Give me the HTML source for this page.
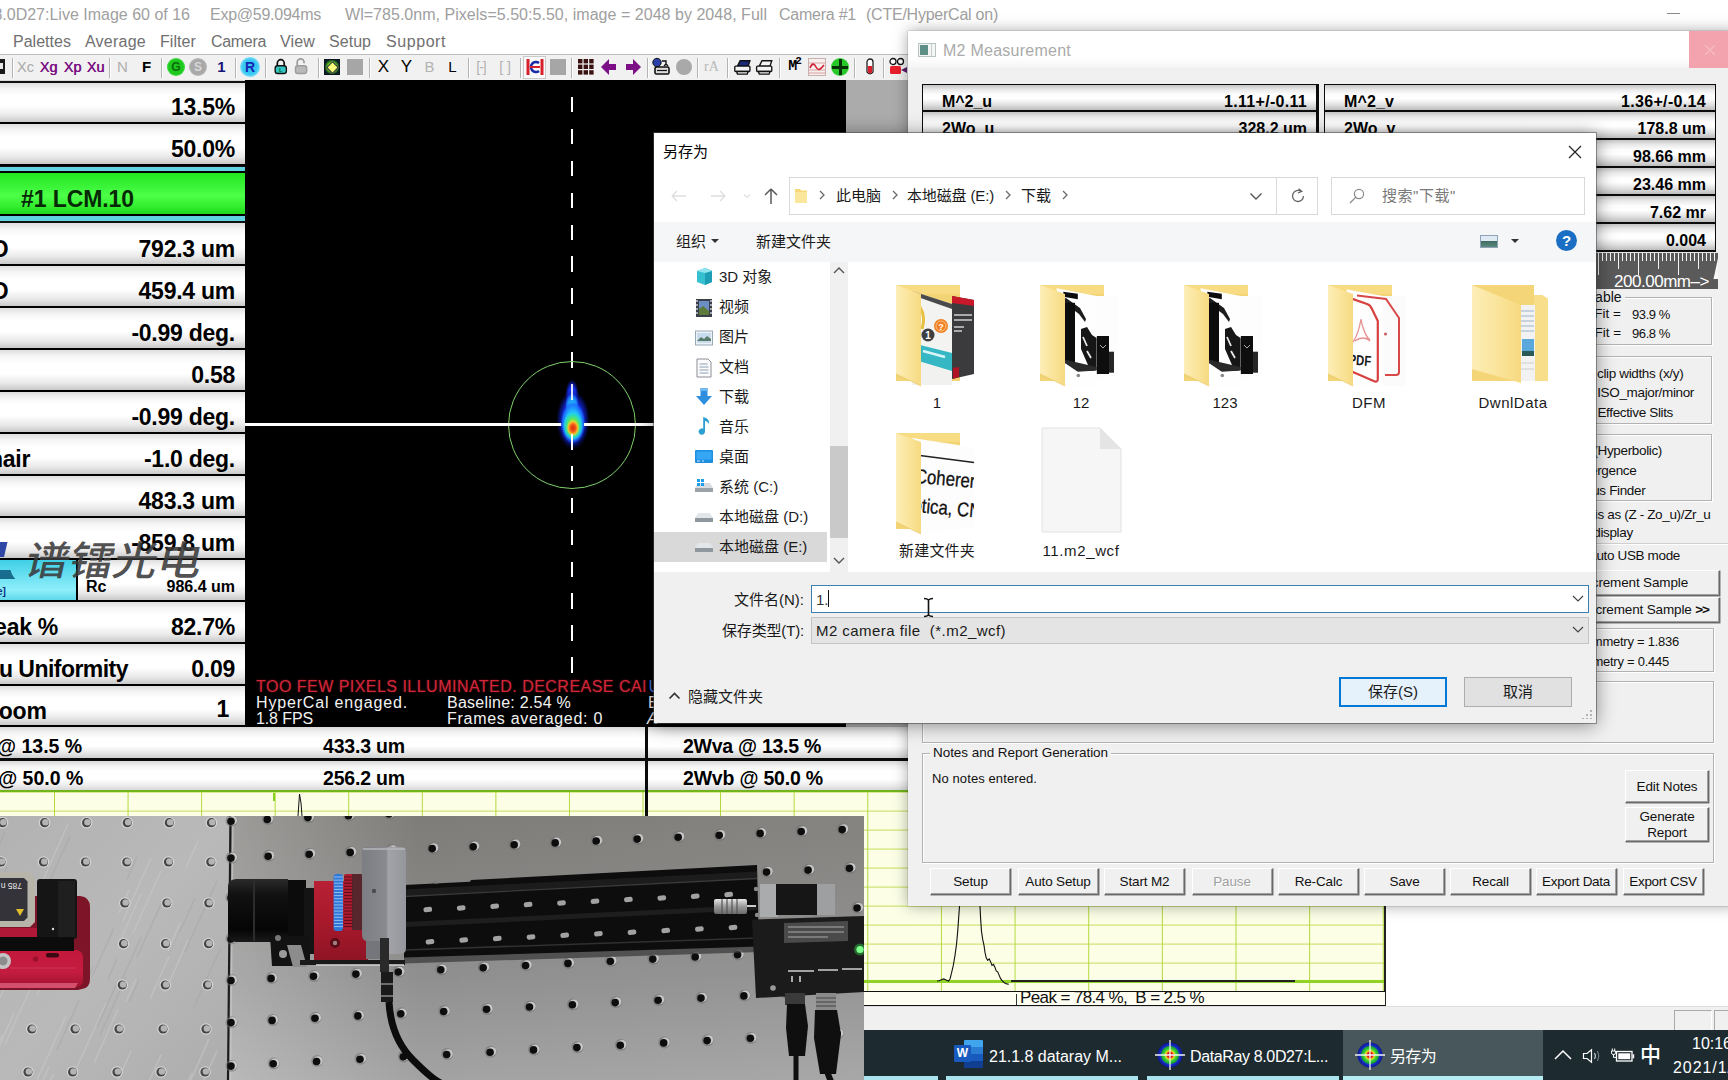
<!DOCTYPE html>
<html lang="zh"><head><meta charset="utf-8"><title>DataRay</title>
<style>
*{box-sizing:border-box;margin:0;padding:0}
html,body{width:1728px;height:1080px;overflow:hidden;background:#fff}
body{position:relative;font-family:"Liberation Sans","Noto Sans CJK SC",sans-serif;color:#000}
.a{position:absolute}
.t{position:absolute;white-space:nowrap;line-height:1}
.b{font-weight:bold}
.r{text-align:right}
.row{position:absolute;left:0;width:245px;height:40px;border-bottom:2px solid #000;box-sizing:content-box;
 background:linear-gradient(#dedede 0%,#f6f6f6 16%,#fff 32%,#fff 60%,#e9e9e9 82%,#c9c9c9 100%)}
.row .t{font-weight:bold;font-size:23px;letter-spacing:-.25px;top:10px}
.row .v{right:10px}
.sep{position:absolute;top:58px;width:1px;height:20px;background:#b4b4b4;box-shadow:1px 0 0 #fff}
.ti{position:absolute;top:56px;height:22px;line-height:22px;font-size:16px;white-space:nowrap;text-align:center}
</style></head><body>
<!-- ===== DataRay main window ===== -->
<div class="a" style="left:0;top:0;width:1728px;height:54px;background:#fff"></div>
<div class="t" style="right:1538px;top:7px;font-size:16px;color:#a0a0a0" >8.0D27:Live Image 60 of 16</div>
<div class="t" style="letter-spacing:-0.257px;left:210px;top:7px;font-size:16px;color:#a0a0a0">Exp@59.094ms</div>
<div class="t" style="letter-spacing:0.031px;left:345px;top:7px;font-size:16px;color:#a0a0a0">Wl=785.0nm, Pixels=5.50:5.50, image = 2048 by 2048, Full</div>
<div class="t" style="letter-spacing:-0.240px;left:779px;top:7px;font-size:16px;color:#a0a0a0">Camera #1</div>
<div class="t" style="letter-spacing:-0.237px;left:866px;top:7px;font-size:16px;color:#a0a0a0">(CTE/HyperCal on)</div>
<div class="a" style="left:1667px;top:12.500px;width:13px;height:1.200px;background:#8a8a8a"></div>
<!-- menu -->
<div class="t" style="letter-spacing:0.023px;left:13px;top:34px;font-size:16px;color:#707070">Palettes</div>
<div class="t" style="letter-spacing:0.241px;left:85px;top:34px;font-size:16px;color:#707070">Average</div>
<div class="t" style="letter-spacing:0.073px;left:160px;top:34px;font-size:16px;color:#707070">Filter</div>
<div class="t" style="letter-spacing:-0.318px;left:211px;top:34px;font-size:16px;color:#707070">Camera</div>
<div class="t" style="letter-spacing:0.152px;left:280px;top:34px;font-size:16px;color:#707070">View</div>
<div class="t" style="letter-spacing:0.037px;left:329px;top:34px;font-size:16px;color:#707070">Setup</div>
<div class="t" style="letter-spacing:0.565px;left:386px;top:34px;font-size:16px;color:#707070">Support</div>
<!-- toolbar -->
<div class="a" style="left:0;top:54px;width:910px;height:27px;background:#f1f1f1;border-top:1px solid #bdbdbd;border-bottom:1px solid #d8d8d8"></div>
<div class="a" style="left:0;top:59px;width:5px;height:15px;background:#1a1a1a"></div><div class="a" style="left:0;top:63px;width:3px;height:6px;background:#e8e8e8"></div>
<i class="sep" style="left:12px"></i><i class="sep" style="left:109px"></i><i class="sep" style="left:161px"></i><i class="sep" style="left:235px"></i><i class="sep" style="left:265px"></i><i class="sep" style="left:318px"></i><i class="sep" style="left:369px"></i><i class="sep" style="left:468px"></i><i class="sep" style="left:520px"></i><i class="sep" style="left:571px"></i><i class="sep" style="left:647px"></i><i class="sep" style="left:697px"></i><i class="sep" style="left:727px"></i><i class="sep" style="left:779px"></i><i class="sep" style="left:854px"></i><i class="sep" style="left:883px"></i>
<span class="ti" style="left:16px;width:19px;color:#a9a9a9;font-size:14.500px">Xc</span>
<span class="ti" style="left:39px;width:19px;color:#7a0f82;font-size:14.500px;text-shadow:.4px 0 0 #7a0f82">Xg</span>
<span class="ti" style="left:63px;width:19px;color:#7a0f82;font-size:14.500px;text-shadow:.4px 0 0 #7a0f82">Xp</span>
<span class="ti" style="left:86px;width:19px;color:#7a0f82;font-size:14.500px;text-shadow:.4px 0 0 #7a0f82">Xu</span>
<span class="ti" style="left:113px;width:19px;color:#b0b0b0;font-size:15px">N</span>
<span class="ti b" style="left:137px;width:19px;color:#000;font-size:15px">F</span>
<span class="ti b" style="left:167px;top:58px;width:18px;height:18px;line-height:18px;border-radius:50%;background:radial-gradient(#1fc81f 55%,#46e046 75%,rgba(90,230,90,0) 100%);color:#0a6a0a;font-size:12px">G</span>
<span class="ti b" style="left:189px;top:58px;width:18px;height:18px;line-height:18px;border-radius:50%;background:radial-gradient(#a8a8a8 55%,#bdbdbd 75%,rgba(190,190,190,0) 100%);color:#d8d8d8;font-size:12px">S</span>
<span class="ti b" style="left:212px;width:19px;color:#16167a;font-size:15px">1</span>
<span class="ti b" style="left:240px;top:57px;width:20px;height:20px;line-height:20px;border-radius:50%;background:radial-gradient(#37c8f2 50%,#8fe2fa 75%,rgba(160,230,250,0) 100%);color:#1527b5;font-size:14px">R</span>
<!-- locks -->
<svg class="a" style="left:272px;top:58px" width="40" height="19" viewBox="0 1 46 22"><path d="M6 10V7a4 4 0 0 1 8 0v3" fill="none" stroke="#111" stroke-width="2"/><rect x="3.5" y="10" width="13" height="9" rx="3" fill="#35c5c5" stroke="#111" stroke-width="1.6"/><text x="10" y="17.5" font-size="7" font-family="Liberation Sans,sans-serif" font-weight="bold" text-anchor="middle" fill="#063">L</text><path d="M29 10V6a4 4 0 0 1 8 0v1" fill="none" stroke="#9c9c9c" stroke-width="2"/><rect x="27" y="10" width="13" height="9" rx="3" fill="#b9b9b9" stroke="#9c9c9c" stroke-width="1.6"/></svg>
<div class="a" style="left:324px;top:59px;width:16px;height:16px;background:radial-gradient(#e8ff50 18%,#58c820 45%,#0c1c28 78%);border:1px solid #0a1520"></div>
<div class="a" style="left:327.5px;top:62.5px;width:9px;height:9px;border:1.5px solid #223;transform:rotate(45deg);background:#f6ff7a"></div>
<div class="a" style="left:347px;top:59px;width:16px;height:16px;background:#a6a6a6"></div>
<span class="ti" style="left:374px;width:19px;color:#000;font-size:17px">X</span>
<span class="ti" style="left:397px;width:19px;color:#000;font-size:17px">Y</span>
<span class="ti" style="left:420px;width:19px;color:#b3b3b3;font-size:15px">B</span>
<span class="ti" style="left:443px;width:19px;color:#000;font-size:15px">L</span>
<span class="ti" style="left:471px;width:20px;color:#b3b3b3;font-size:14px;letter-spacing:-1px">[-]</span>
<span class="ti" style="left:495px;width:20px;color:#b3b3b3;font-size:14px">[ ]</span>
<div class="a" style="left:523px;top:56px;width:23px;height:23px;background:#fafafa;border:1px solid #c9c9c9"></div>
<svg class="a" style="left:526px;top:58px" width="18" height="18" viewBox="0 0 18 18"><path d="M2 1v16M16 1v16" stroke="#d8202c" stroke-width="3"/><path d="M13 5a5 5 0 1 0 0 8" fill="none" stroke="#1a2aa8" stroke-width="2.6"/><path d="M4 9h10" stroke="#d8202c" stroke-width="2"/></svg>
<div class="a" style="left:550px;top:59px;width:16px;height:16px;background:#a6a6a6"></div>
<svg class="a" style="left:578px;top:59px" width="16" height="16" viewBox="0 0 16 16"><g fill="#3a1212"><rect x="0" y="0" width="4.4" height="4.4"/><rect x="5.6" y="0" width="4.4" height="4.4"/><rect x="11.2" y="0" width="4.4" height="4.4"/><rect x="0" y="5.6" width="4.4" height="4.4"/><rect x="5.6" y="5.6" width="4.4" height="4.4"/><rect x="11.2" y="5.6" width="4.4" height="4.4"/><rect x="0" y="11.2" width="4.4" height="4.4"/><rect x="5.6" y="11.2" width="4.4" height="4.4"/><rect x="11.2" y="11.2" width="4.4" height="4.4"/></g></svg>
<svg class="a" style="left:600px;top:58px" width="42" height="18" viewBox="0 0 42 18"><path d="M1 9l8-8v5h7v6H9v5z" fill="#7d0f86"/><path d="M41 9l-8-8v5h-7v6h7v5z" fill="#7d0f86"/></svg>
<svg class="a" style="left:651px;top:57px" width="22" height="20" viewBox="0 0 22 20"><circle cx="6" cy="5.5" r="4.2" fill="#2a3fa8" stroke="#111" stroke-width="1"/><path d="M11 4h4v3M17 9l-2-2-2 2" fill="none" stroke="#111" stroke-width="1.4"/><rect x="4" y="10" width="14" height="7" rx="1.5" fill="#dcdcdc" stroke="#111" stroke-width="1.6"/><path d="M6 13.5h10" stroke="#111" stroke-width="1.2"/></svg>
<div class="a" style="left:676px;top:59px;width:16px;height:16px;border-radius:50%;background:#a9a9a9"></div>
<span class="ti" style="left:701px;width:21px;color:#b8b8b8;font-size:14px;font-family:'Liberation Serif',serif">rA</span>
<svg class="a" style="left:733px;top:58px" width="41" height="18" viewBox="0 0 46 20"><g fill="#f4f4f4" stroke="#111" stroke-width="1.5"><path d="M5 9l3-6h11l-2 6z" fill="#1c2a7a"/><rect x="2" y="9" width="17" height="6" rx="1"/><path d="M4 15h13l-1 3H5z"/><path d="M29.500 9l3-6h11l-2 6z"/><rect x="26.500" y="9" width="17" height="6" rx="1"/><path d="M28.500 15h13l-1 3H29.500z"/></g></svg>
<span class="ti b" style="left:783px;width:22px;color:#000;font-size:15px;font-family:'Liberation Mono',monospace;letter-spacing:-2px">M<sup style="font-size:11px;line-height:0">2</sup></span>
<svg class="a" style="left:808px;top:58px" width="18" height="18" viewBox="0 0 18 18"><rect x=".5" y=".5" width="17" height="17" fill="#f7eeee" stroke="#c9b0b0"/><path d="M1 5h16M1 12h16M1 15h16" stroke="#d9a0a0" stroke-width="1"/><path d="M2 10c2-5 4-5 6-1s4 3 8-2" fill="none" stroke="#d02030" stroke-width="1.6"/></svg>
<div class="a" style="left:831px;top:58px;width:18px;height:18px;border-radius:50%;background:radial-gradient(#28c828 60%,#5be05b 80%,rgba(90,230,90,0) 100%)"></div>
<div class="a" style="left:838.5px;top:59px;width:3px;height:16px;background:#063006"></div><div class="a" style="left:832px;top:65.5px;width:16px;height:3px;background:#063006"></div>
<svg class="a" style="left:864px;top:57px" width="12" height="21" viewBox="0 0 12 21"><path d="M3 5a3 3 0 0 1 6 0v10a3.4 3.4 0 0 1-6 0z" fill="#fff" stroke="#222" stroke-width="1.3"/><path d="M3.8 9h4.4v6a2.4 2.4 0 0 1-4.4 0z" fill="#d8202c"/></svg>
<svg class="a" style="left:888px;top:57px" width="22" height="21" viewBox="0 0 22 21"><circle cx="5" cy="4.5" r="3" fill="#fff" stroke="#111" stroke-width="1.3"/><circle cx="12.5" cy="4.5" r="3" fill="#fff" stroke="#111" stroke-width="1.3"/><rect x="2" y="9" width="11" height="8" rx="1.5" fill="#e8202c"/><path d="M13 13l6-3v6z" fill="#5a1a6a"/></svg>
<!-- ===== left results panel ===== -->
<div class="a" style="left:0;top:81px;width:245px;height:647px;background:#e8e8e8"></div>
<div class="a" style="left:0;top:81px;width:245px;height:2px;background:#111"></div>
<div class="row" style="top:83px;height:39px"><span class="t v" style="top:12.800px">13.5%</span></div>
<div class="row" style="top:124px"><span class="t v" style="top:13.800px">50.0%</span></div>
<div class="a" style="left:0;top:166px;width:245px;height:57px;background:#5fd3e0;border-top:1px solid #111;border-bottom:2px solid #111"></div>
<div class="a" style="left:0;top:171px;width:245px;height:45px;border-top:2px solid #000;border-bottom:2px solid #000;background:linear-gradient(#22e61e 0%,#3cf53a 35%,#4dff48 55%,#34f030 80%,#1fd81c 100%)"><span class="t b" style="letter-spacing:-0.085px;left:21px;top:14.500px;font-size:23px;color:#062a06">#1 LCM.10</span></div>
<div class="row" style="top:223px;height:41px"><span class="t" style="left:-8px;top:14.500px">D</span><span class="t v" style="top:14.500px">792.3 um</span></div>
<div class="row" style="top:266px"><span class="t" style="left:-8px;top:13.600px">D</span><span class="t v" style="top:13.600px">459.4 um</span></div>
<div class="row" style="top:308px"><span class="t v" style="top:13.600px">-0.99 deg.</span></div>
<div class="row" style="top:350px"><span class="t v" style="top:13.600px">0.58</span></div>
<div class="row" style="top:392px"><span class="t v" style="top:13.600px">-0.99 deg.</span></div>
<div class="row" style="top:434px"><span class="t" style="left:-11px;top:13.600px">hair</span><span class="t v" style="top:13.600px">-1.0 deg.</span></div>
<div class="row" style="top:476px"><span class="t v" style="top:13.600px">483.3 um</span></div>
<div class="row" style="top:518px"><span class="t v" style="top:13.600px">-859.8 um</span></div>
<div class="row" style="top:560px"><span class="t" style="left:86px;top:19px;font-size:16px;letter-spacing:0">Rc</span><span class="t v" style="top:19px;font-size:16px;letter-spacing:0">986.4 um</span></div>
<div class="a" style="left:0;top:560px;width:78px;height:40px;border-right:2px solid #000;background:linear-gradient(#3fcfe6 0%,#6fe2f2 45%,#8feefa 75%,#5fd8ea 100%)"><span class="t b" style="left:-3px;top:27px;font-size:10px;color:#0b2e7a">e]</span></div>
<div class="row" style="top:602px"><span class="t" style="left:-21px;top:13.600px">Peak %</span><span class="t v" style="top:13.600px">82.7%</span></div>
<div class="row" style="top:644px"><span class="t" style="letter-spacing:-0.538px;left:-1px;top:13.600px">u Uniformity</span><span class="t v" style="top:13.600px">0.09</span></div>
<div class="row" style="top:686px;height:39px"><span class="t" style="left:-15px;top:13.600px">Zoom</span><span class="t v" style="right:16px;top:12.300px">1</span></div>
<!-- watermark -->
<svg class="a" style="left:0;top:540px" width="18" height="42" viewBox="0 0 18 42"><path d="M0 2h7.500L4 17H0z" fill="#2f46a6"/><path d="M0 30h10.500q1.500 6 5 9H0z" fill="#186c8e"/></svg>
<div class="t" style="left:27px;top:537.500px;font-size:40px;font-weight:500;color:rgba(58,58,58,.9);transform:skewX(-13deg) scaleX(1.100);transform-origin:0 50%;font-family:'Noto Sans CJK SC',sans-serif">谱镭光电</div>
<!-- ===== black camera image ===== -->
<div class="a" style="left:245px;top:80px;width:601px;height:647px;background:#000;overflow:hidden">
 <div class="a" style="left:0;top:343px;width:601px;height:3px;background:#fff"></div>
 <div class="a" style="left:325.500px;top:16.900px;width:2.500px;height:335px;background:repeating-linear-gradient(#fff 0,#fff 15.400px,transparent 15.400px,transparent 31.900px)"></div>
 <div class="a" style="left:325.500px;top:354.400px;width:2.500px;height:239px;background:repeating-linear-gradient(#fff 0,#fff 15.400px,transparent 15.400px,transparent 31.900px)"></div>
 <div class="a" style="left:263px;top:281px;width:128px;height:128px;border:1.300px solid #7fd06a;border-radius:50%"></div>
 <!-- beam -->
 <svg class="a" style="left:296px;top:290px" width="64" height="90" viewBox="0 0 64 90"><defs>
  <radialGradient id="b1"><stop offset="0" stop-color="#1838ff"/><stop offset=".55" stop-color="#1430ee" stop-opacity=".95"/><stop offset=".8" stop-color="#0c1cb0" stop-opacity=".6"/><stop offset="1" stop-color="#060a50" stop-opacity="0"/></radialGradient>
  <radialGradient id="b2"><stop offset="0" stop-color="#2ae0ff"/><stop offset=".6" stop-color="#20b4ff"/><stop offset=".85" stop-color="#1c70ff" stop-opacity=".8"/><stop offset="1" stop-color="#1838ff" stop-opacity="0"/></radialGradient>
  <radialGradient id="b3"><stop offset="0" stop-color="#d8f23a"/><stop offset=".5" stop-color="#5ee65a"/><stop offset=".8" stop-color="#28dcc0" stop-opacity=".85"/><stop offset="1" stop-color="#2ae0ff" stop-opacity="0"/></radialGradient>
  <radialGradient id="b4"><stop offset="0" stop-color="#e02a10"/><stop offset=".4" stop-color="#ee5518"/><stop offset=".7" stop-color="#f8b428"/><stop offset="1" stop-color="#e8f23a" stop-opacity="0"/></radialGradient></defs>
  <ellipse cx="31" cy="26" rx="7" ry="17" fill="url(#b1)"/>
  <ellipse cx="32" cy="50" rx="17" ry="30" fill="url(#b1)"/>
  <ellipse cx="31" cy="36" rx="7" ry="13" fill="url(#b2)" opacity=".8"/>
  <ellipse cx="32" cy="53" rx="12.500" ry="21" fill="url(#b2)"/>
  <ellipse cx="32" cy="56" rx="10" ry="14.500" fill="url(#b3)"/>
  <ellipse cx="32" cy="58" rx="6.500" ry="8.500" fill="url(#b4)"/>
 </svg>
 <div class="a" style="left:325.500px;top:304px;width:2.500px;height:15.500px;background:rgba(255,255,255,.85)"></div>
 <div class="a" style="left:325.500px;top:354.400px;width:2.500px;height:15.400px;background:#fff"></div>
 <div class="a" style="left:0;top:343px;width:316px;height:3px;background:#fff"></div><div class="a" style="left:339px;top:343px;width:270px;height:3px;background:#fff"></div>
 <!-- status text -->
 <div class="t" style="letter-spacing:0.477px;left:11px;top:599px;font-size:16px;color:#d02639;text-shadow:0 0 2px #7a1018">TOO FEW PIXELS ILLUMINATED. DECREASE CAI</div>
 <div class="t" style="letter-spacing:0.831px;left:11px;top:615px;font-size:16px;color:#f2f2f2">HyperCal engaged.</div>
 <div class="t" style="letter-spacing:-0.116px;left:11px;top:631px;font-size:16px;color:#f2f2f2">1.8 FPS</div>
 <div class="t" style="letter-spacing:0.245px;left:202px;top:615px;font-size:16px;color:#f2f2f2">Baseline: 2.54 %</div>
 <div class="t" style="letter-spacing:0.712px;left:202px;top:631px;font-size:16px;color:#f2f2f2">Frames averaged: 0</div>
 <div class="t" style="left:403.500px;top:599px;font-size:16px;color:#3f6fe0">U</div>
 <div class="t" style="left:403px;top:615px;font-size:16px;color:#f2f2f2">E</div>
 <div class="t" style="left:402px;top:631px;font-size:16px;color:#f2f2f2;font-style:italic">A</div>
</div>
<div class="a" style="left:846px;top:80px;width:64px;height:650px;background:#ababab"></div>
<!-- ===== width rows + profile plots ===== -->
<div class="a" style="left:0;top:727px;width:910px;height:31px;background:linear-gradient(#d9d9d9 0%,#f3f3f3 18%,#fff 36%,#fff 62%,#e6e6e6 84%,#cfcfcf 100%)"></div>
<div class="a" style="left:0;top:758px;width:910px;height:3px;background:#0a0a0a"></div>
<div class="a" style="left:0;top:761px;width:910px;height:29px;background:linear-gradient(#d9d9d9 0%,#f3f3f3 18%,#fff 36%,#fff 62%,#ececec 84%,#d8d8d8 100%)"></div>
<div class="t b" style="left:-60px;top:737px;font-size:19.5px" >2Wua @ 13.5 %</div>
<div class="t b" style="left:-60px;top:768.5px;font-size:19.5px" >2Wub @ 50.0 %</div>
<div class="t b" style="letter-spacing:-0.184px;left:323px;top:737px;font-size:19.5px">433.3 um</div>
<div class="t b" style="letter-spacing:-0.184px;left:323px;top:768.5px;font-size:19.5px">256.2 um</div>
<div class="t b" style="letter-spacing:-0.269px;left:683px;top:737px;font-size:19.5px">2Wva @ 13.5 %</div>
<div class="t b" style="letter-spacing:-0.198px;left:683px;top:768.5px;font-size:19.5px">2Wvb @ 50.0 %</div>
<!-- plot background -->
<div class="a" style="left:0;top:790px;width:648px;height:202px;background-color:#fcffe6;
 background-image:linear-gradient(90deg,#b4d83c 0,#b4d83c 1.300px,transparent 1.300px),linear-gradient(#c2de5a 0,#c2de5a 1.200px,transparent 1.200px);
 background-size:73.570px 100%,100% 19px;background-position:54px 0,0 1.600px"></div>
<div class="a" style="left:648px;top:790px;width:737px;height:202px;background-color:#fcffe6;
 background-image:linear-gradient(90deg,#b4d83c 0,#b4d83c 1.300px,transparent 1.300px),linear-gradient(#c2de5a 0,#c2de5a 1.200px,transparent 1.200px);
 background-size:73.650px 100%,100% 19px;background-position:72px 0,0 1.600px"></div>
<div class="a" style="left:0;top:790px;width:1385px;height:1.700px;background:#70b41e"></div>
<div class="a" style="left:864px;top:980px;width:521px;height:2.5px;background:#8fd424"></div>
<div class="a" style="left:1011px;top:980.300px;width:284px;height:1.400px;background:#222"></div>
<div class="a" style="left:645px;top:727px;width:3px;height:90px;background:#0a0a0a"></div>
<div class="a" style="left:1384px;top:905px;width:1.5px;height:101px;background:#222"></div>
<svg class="a" style="left:0;top:790px" width="1385" height="202" viewBox="0 790 1385 202"><path d="M274 793v8" stroke="#86d020" stroke-width="2"/><path d="M298 816l1.5-22 1.5 9 1 13" fill="none" stroke="#111" stroke-width="1"/>
<path d="M937 981l2-.3 2.500-1 2.200-.8 2.500 1.200 2.300.9 1.500-2 1.500-5.800 1.800-7.800 1.700-10 1.500-11 1.200-13 1-14 .8-11v-6h20.500v6l.6 12 .9 13 1.200 8 1.300 6 1 7 1.200 5.500 1.500 2.500 1.500-1.500 1.500 3 1.300 3.500 1.500-1 1.500 3 1.200 3.500 1.500 1 1.300 3 1.500 3.500 1.800 2.500 2 1.800 2.500 1.200 2 .4" fill="none" stroke="#111" stroke-width="1.100"/></svg>
<!-- peak text strip -->
<div class="a" style="left:864px;top:991px;width:521px;height:15px;background:#fefff2;border-top:1.5px solid #111;border-bottom:1.5px solid #111"></div>
<div class="a" style="left:1016px;top:994px;width:1px;height:11px;background:#333"></div>
<div class="t" style="letter-spacing:-0.616px;left:1020px;top:989px;font-size:17px;color:#111;white-space:pre">Peak = 78.4 %,  B = 2.5 %</div>
<!-- white right area + status bar -->
<div class="a" style="left:1386px;top:900px;width:342px;height:106px;background:#fff"></div>
<div class="a" style="left:864px;top:1006px;width:864px;height:24px;background:#f0f0f0;border-top:1px solid #dcdcdc"></div>
<div class="a" style="left:1674px;top:1010px;width:38px;height:20px;border-left:1px solid #a9a9a9;border-top:1px solid #a9a9a9;border-right:1px solid #fff"></div>
<div class="a" style="left:1714px;top:1010px;width:20px;height:20px;border-left:1px solid #a9a9a9;border-top:1px solid #a9a9a9"></div>
<!-- ===== lab photo (vector approximation) ===== -->
<svg class="a" style="left:0;top:816px" width="864" height="264" viewBox="0 0 864 264">
<defs>
<linearGradient id="tl" x1="0" y1="0" x2="1" y2="1"><stop offset="0" stop-color="#b2b2b2"/><stop offset=".5" stop-color="#b9b9b9"/><stop offset="1" stop-color="#adadad"/></linearGradient>
<linearGradient id="tr" x1="0" y1="0" x2="0" y2="1"><stop offset="0" stop-color="#7f7d7a"/><stop offset=".3" stop-color="#858482"/><stop offset=".6" stop-color="#8f8f8f"/><stop offset="1" stop-color="#a3a3a3"/></linearGradient>
<linearGradient id="trx" x1="0" y1="0" x2="1" y2="0"><stop offset="0" stop-color="#fff" stop-opacity=".24"/><stop offset=".3" stop-color="#fff" stop-opacity="0"/><stop offset="1" stop-color="#fff" stop-opacity=".05"/></linearGradient>
<linearGradient id="lens" x1="0" y1="0" x2="0" y2="1"><stop offset="0" stop-color="#2a2a2a"/><stop offset=".25" stop-color="#111"/><stop offset=".8" stop-color="#050505"/><stop offset="1" stop-color="#1a1a1a"/></linearGradient>
<linearGradient id="red" x1="0" y1="0" x2="0" y2="1"><stop offset="0" stop-color="#b82035"/><stop offset=".5" stop-color="#a8192c"/><stop offset="1" stop-color="#8e1424"/></linearGradient>
<linearGradient id="red2" x1="0" y1="0" x2="0" y2="1"><stop offset="0" stop-color="#c2183a"/><stop offset=".6" stop-color="#c41c40"/><stop offset="1" stop-color="#a01230"/></linearGradient>
<linearGradient id="cam" x1="0" y1="0" x2="1" y2="0"><stop offset="0" stop-color="#7c7e84"/><stop offset=".55" stop-color="#888a90"/><stop offset=".6" stop-color="#a2a4a9"/><stop offset="1" stop-color="#94969b"/></linearGradient>
<linearGradient id="sil" x1="0" y1="0" x2="0" y2="1"><stop offset="0" stop-color="#e8e8e8"/><stop offset=".5" stop-color="#9a9a9a"/><stop offset="1" stop-color="#6a6a6a"/></linearGradient>
<radialGradient id="hd"><stop offset="0" stop-color="#0c0c0c"/><stop offset=".6" stop-color="#1c1c1c"/><stop offset=".8" stop-color="#5a5a5a"/><stop offset="1" stop-color="#bdbdbd" stop-opacity=".7"/></radialGradient>
<radialGradient id="hd2"><stop offset="0" stop-color="#0a0a0a"/><stop offset=".7" stop-color="#1a1a1a"/><stop offset="1" stop-color="#4a4a4a"/></radialGradient>
<radialGradient id="hl"><stop offset="0" stop-color="#8a8a8a"/><stop offset=".55" stop-color="#9a9a9a"/><stop offset=".75" stop-color="#dadada"/><stop offset="1" stop-color="#9c9c9c" stop-opacity=".6"/></radialGradient>
</defs>
<rect x="0" y="0" width="232" height="264" fill="url(#tl)"/>
<rect x="229" y="0" width="635" height="264" fill="url(#tr)"/>
<rect x="229" y="0" width="635" height="264" fill="url(#trx)"/>
<path d="M54 141l-17 38M136 163l-10 23M3 218l-15 33M53 259l-20 44M188 124l-23 52M34 165l-29 63M118 193l-24 54M14 197l-22 50M68 8l-28 63M106 187l-29 64M161 239l-18 40M180 116l-30 67M198 25l-12 27M49 251l-19 42M141 78l-20 45M87 91l-22 49M131 235l-24 54M209 223l-31 70M151 42l-28 63M217 235l-22 48M161 55l-28 62M129 74l-10 23M192 257l-11 24M180 107l-12 28M66 200l-29 64M10 160l-10 22" stroke="#c9c9c9" stroke-width="1.6" opacity=".55" fill="none"/>
<path d="M162 86l-25 55M221 131l-27 60M70 20l-20 44M7 51l-16 36M137 41l-10 22M195 82l-26 58M202 98l-17 38M117 167l-20 44M126 161l-26 58M114 112l-22 49M53 78l-27 59M117 143l-9 20M93 151l-9 21M139 164l-10 22M141 121l-21 47M79 184l-22 50M5 16l-21 47M217 65l-17 38" stroke="#a6a6a6" stroke-width="1.4" opacity=".5" fill="none"/>
<path d="M230.5 0L228 264" stroke="#1c1c1c" stroke-width="2.2"/>
<path d="M233 0L230.5 264" stroke="#c9c9c9" stroke-width="1.5" opacity=".7"/>
<circle cx="2.5" cy="6.7" r="5.800" fill="#d6d6d6"/><circle cx="2.5" cy="6.7" r="4.600" fill="#444"/><circle cx="3.4" cy="6.2" r="3.300" fill="#b4b4b4"/><circle cx="44.6" cy="6.7" r="5.800" fill="#d6d6d6"/><circle cx="44.6" cy="6.7" r="4.600" fill="#444"/><circle cx="45.5" cy="6.2" r="3.300" fill="#b4b4b4"/><circle cx="86.6" cy="6.7" r="5.800" fill="#d6d6d6"/><circle cx="86.6" cy="6.7" r="4.600" fill="#444"/><circle cx="87.5" cy="6.2" r="3.300" fill="#b4b4b4"/><circle cx="127.3" cy="6.7" r="5.800" fill="#d6d6d6"/><circle cx="127.3" cy="6.7" r="4.600" fill="#444"/><circle cx="128.2" cy="6.2" r="3.300" fill="#b4b4b4"/><circle cx="169.3" cy="6.7" r="5.800" fill="#d6d6d6"/><circle cx="169.3" cy="6.7" r="4.600" fill="#444"/><circle cx="170.2" cy="6.2" r="3.300" fill="#b4b4b4"/><circle cx="211.4" cy="6.7" r="5.800" fill="#d6d6d6"/><circle cx="211.4" cy="6.7" r="4.600" fill="#444"/><circle cx="212.3" cy="6.2" r="3.300" fill="#b4b4b4"/><circle cx="1.0" cy="46.0" r="5.800" fill="#d6d6d6"/><circle cx="1.0" cy="46.0" r="4.600" fill="#444"/><circle cx="1.9" cy="45.5" r="3.300" fill="#b4b4b4"/><circle cx="43.5" cy="46.0" r="5.800" fill="#d6d6d6"/><circle cx="43.5" cy="46.0" r="4.600" fill="#444"/><circle cx="44.4" cy="45.5" r="3.300" fill="#b4b4b4"/><circle cx="85.5" cy="46.0" r="5.800" fill="#d6d6d6"/><circle cx="85.5" cy="46.0" r="4.600" fill="#444"/><circle cx="86.4" cy="45.5" r="3.300" fill="#b4b4b4"/><circle cx="126.8" cy="46.0" r="5.800" fill="#d6d6d6"/><circle cx="126.8" cy="46.0" r="4.600" fill="#444"/><circle cx="127.7" cy="45.5" r="3.300" fill="#b4b4b4"/><circle cx="168.5" cy="46.0" r="5.800" fill="#d6d6d6"/><circle cx="168.5" cy="46.0" r="4.600" fill="#444"/><circle cx="169.4" cy="45.5" r="3.300" fill="#b4b4b4"/><circle cx="210.8" cy="46.0" r="5.800" fill="#d6d6d6"/><circle cx="210.8" cy="46.0" r="4.600" fill="#444"/><circle cx="211.7" cy="45.5" r="3.300" fill="#b4b4b4"/><circle cx="124.8" cy="87.0" r="5.800" fill="#d6d6d6"/><circle cx="124.8" cy="87.0" r="4.600" fill="#444"/><circle cx="125.7" cy="86.5" r="3.300" fill="#b4b4b4"/><circle cx="166.8" cy="87.0" r="5.800" fill="#d6d6d6"/><circle cx="166.8" cy="87.0" r="4.600" fill="#444"/><circle cx="167.7" cy="86.5" r="3.300" fill="#b4b4b4"/><circle cx="208.8" cy="87.0" r="5.800" fill="#d6d6d6"/><circle cx="208.8" cy="87.0" r="4.600" fill="#444"/><circle cx="209.7" cy="86.5" r="3.300" fill="#b4b4b4"/><circle cx="123.5" cy="127.7" r="5.800" fill="#d6d6d6"/><circle cx="123.5" cy="127.7" r="4.600" fill="#444"/><circle cx="124.4" cy="127.2" r="3.300" fill="#b4b4b4"/><circle cx="165.5" cy="127.7" r="5.800" fill="#d6d6d6"/><circle cx="165.5" cy="127.7" r="4.600" fill="#444"/><circle cx="166.4" cy="127.2" r="3.300" fill="#b4b4b4"/><circle cx="208.5" cy="127.7" r="5.800" fill="#d6d6d6"/><circle cx="208.5" cy="127.7" r="4.600" fill="#444"/><circle cx="209.4" cy="127.2" r="3.300" fill="#b4b4b4"/><circle cx="122.3" cy="169.0" r="5.800" fill="#d6d6d6"/><circle cx="122.3" cy="169.0" r="4.600" fill="#444"/><circle cx="123.2" cy="168.5" r="3.300" fill="#b4b4b4"/><circle cx="165.3" cy="169.0" r="5.800" fill="#d6d6d6"/><circle cx="165.3" cy="169.0" r="4.600" fill="#444"/><circle cx="166.2" cy="168.5" r="3.300" fill="#b4b4b4"/><circle cx="207.5" cy="169.0" r="5.800" fill="#d6d6d6"/><circle cx="207.5" cy="169.0" r="4.600" fill="#444"/><circle cx="208.4" cy="168.5" r="3.300" fill="#b4b4b4"/><circle cx="31.8" cy="213.0" r="5.800" fill="#d6d6d6"/><circle cx="31.8" cy="213.0" r="4.600" fill="#444"/><circle cx="32.7" cy="212.5" r="3.300" fill="#b4b4b4"/><circle cx="75.0" cy="213.0" r="5.800" fill="#d6d6d6"/><circle cx="75.0" cy="213.0" r="4.600" fill="#444"/><circle cx="75.9" cy="212.5" r="3.300" fill="#b4b4b4"/><circle cx="119.0" cy="213.0" r="5.800" fill="#d6d6d6"/><circle cx="119.0" cy="213.0" r="4.600" fill="#444"/><circle cx="119.9" cy="212.5" r="3.300" fill="#b4b4b4"/><circle cx="163.0" cy="213.0" r="5.800" fill="#d6d6d6"/><circle cx="163.0" cy="213.0" r="4.600" fill="#444"/><circle cx="163.9" cy="212.5" r="3.300" fill="#b4b4b4"/><circle cx="206.0" cy="213.0" r="5.800" fill="#d6d6d6"/><circle cx="206.0" cy="213.0" r="4.600" fill="#444"/><circle cx="206.9" cy="212.5" r="3.300" fill="#b4b4b4"/><circle cx="28.0" cy="256.0" r="5.800" fill="#d6d6d6"/><circle cx="28.0" cy="256.0" r="4.600" fill="#444"/><circle cx="28.9" cy="255.5" r="3.300" fill="#b4b4b4"/><circle cx="72.6" cy="256.0" r="5.800" fill="#d6d6d6"/><circle cx="72.6" cy="256.0" r="4.600" fill="#444"/><circle cx="73.5" cy="255.5" r="3.300" fill="#b4b4b4"/><circle cx="117.0" cy="256.0" r="5.800" fill="#d6d6d6"/><circle cx="117.0" cy="256.0" r="4.600" fill="#444"/><circle cx="117.9" cy="255.5" r="3.300" fill="#b4b4b4"/><circle cx="161.0" cy="256.0" r="5.800" fill="#d6d6d6"/><circle cx="161.0" cy="256.0" r="4.600" fill="#444"/><circle cx="161.9" cy="255.5" r="3.300" fill="#b4b4b4"/><circle cx="205.0" cy="256.0" r="5.800" fill="#d6d6d6"/><circle cx="205.0" cy="256.0" r="4.600" fill="#444"/><circle cx="205.9" cy="255.5" r="3.300" fill="#b4b4b4"/>
<circle cx="231.5" cy="4.8" r="6" fill="#6c6c6c" opacity=".5"/><circle cx="232.6" cy="4.4" r="4.5" fill="#d2d2d2" opacity=".85"/><circle cx="231.0" cy="5.2" r="3.8" fill="#0d0d0d"/><circle cx="267.8" cy="3.0" r="6" fill="#6c6c6c" opacity=".5"/><circle cx="268.9" cy="2.6" r="4.5" fill="#d2d2d2" opacity=".85"/><circle cx="267.3" cy="3.4" r="3.8" fill="#0d0d0d"/><circle cx="308.4" cy="1.2" r="6" fill="#6c6c6c" opacity=".5"/><circle cx="309.5" cy="0.8" r="4.5" fill="#d2d2d2" opacity=".85"/><circle cx="307.9" cy="1.6" r="3.8" fill="#0d0d0d"/><circle cx="349.0" cy="-0.7" r="6" fill="#6c6c6c" opacity=".5"/><circle cx="350.1" cy="-1.1" r="4.5" fill="#d2d2d2" opacity=".85"/><circle cx="348.5" cy="-0.3" r="3.8" fill="#0d0d0d"/><circle cx="389.5" cy="-2.5" r="6" fill="#6c6c6c" opacity=".5"/><circle cx="390.6" cy="-2.9" r="4.5" fill="#d2d2d2" opacity=".85"/><circle cx="389.0" cy="-2.1" r="3.8" fill="#0d0d0d"/><circle cx="231.5" cy="41.7" r="6" fill="#6c6c6c" opacity=".5"/><circle cx="232.6" cy="41.3" r="4.5" fill="#d2d2d2" opacity=".85"/><circle cx="231.0" cy="42.1" r="3.8" fill="#0d0d0d"/><circle cx="268.7" cy="39.8" r="6" fill="#6c6c6c" opacity=".5"/><circle cx="269.8" cy="39.4" r="4.5" fill="#d2d2d2" opacity=".85"/><circle cx="268.2" cy="40.2" r="3.8" fill="#0d0d0d"/><circle cx="309.7" cy="37.9" r="6" fill="#6c6c6c" opacity=".5"/><circle cx="310.8" cy="37.5" r="4.5" fill="#d2d2d2" opacity=".85"/><circle cx="309.2" cy="38.3" r="3.8" fill="#0d0d0d"/><circle cx="350.7" cy="36.0" r="6" fill="#6c6c6c" opacity=".5"/><circle cx="351.8" cy="35.6" r="4.5" fill="#d2d2d2" opacity=".85"/><circle cx="350.2" cy="36.4" r="3.8" fill="#0d0d0d"/><circle cx="391.7" cy="34.1" r="6" fill="#6c6c6c" opacity=".5"/><circle cx="392.8" cy="33.7" r="4.5" fill="#d2d2d2" opacity=".85"/><circle cx="391.2" cy="34.5" r="3.8" fill="#0d0d0d"/><circle cx="432.7" cy="32.2" r="6" fill="#6c6c6c" opacity=".5"/><circle cx="433.8" cy="31.8" r="4.5" fill="#d2d2d2" opacity=".85"/><circle cx="432.2" cy="32.6" r="3.8" fill="#0d0d0d"/><circle cx="473.7" cy="30.3" r="6" fill="#6c6c6c" opacity=".5"/><circle cx="474.8" cy="29.9" r="4.5" fill="#d2d2d2" opacity=".85"/><circle cx="473.2" cy="30.7" r="3.8" fill="#0d0d0d"/><circle cx="514.7" cy="28.4" r="6" fill="#6c6c6c" opacity=".5"/><circle cx="515.8" cy="28.0" r="4.5" fill="#d2d2d2" opacity=".85"/><circle cx="514.2" cy="28.8" r="3.8" fill="#0d0d0d"/><circle cx="555.7" cy="26.5" r="6" fill="#6c6c6c" opacity=".5"/><circle cx="556.8" cy="26.1" r="4.5" fill="#d2d2d2" opacity=".85"/><circle cx="555.2" cy="26.9" r="3.8" fill="#0d0d0d"/><circle cx="596.7" cy="24.6" r="6" fill="#6c6c6c" opacity=".5"/><circle cx="597.8" cy="24.2" r="4.5" fill="#d2d2d2" opacity=".85"/><circle cx="596.2" cy="25.0" r="3.8" fill="#0d0d0d"/><circle cx="637.7" cy="22.7" r="6" fill="#6c6c6c" opacity=".5"/><circle cx="638.8" cy="22.3" r="4.5" fill="#d2d2d2" opacity=".85"/><circle cx="637.2" cy="23.1" r="3.8" fill="#0d0d0d"/><circle cx="678.7" cy="20.8" r="6" fill="#6c6c6c" opacity=".5"/><circle cx="679.8" cy="20.4" r="4.5" fill="#d2d2d2" opacity=".85"/><circle cx="678.2" cy="21.2" r="3.8" fill="#0d0d0d"/><circle cx="719.7" cy="18.9" r="6" fill="#6c6c6c" opacity=".5"/><circle cx="720.8" cy="18.5" r="4.5" fill="#d2d2d2" opacity=".85"/><circle cx="719.2" cy="19.3" r="3.8" fill="#0d0d0d"/><circle cx="760.7" cy="17.0" r="6" fill="#6c6c6c" opacity=".5"/><circle cx="761.8" cy="16.6" r="4.5" fill="#d2d2d2" opacity=".85"/><circle cx="760.2" cy="17.4" r="3.8" fill="#0d0d0d"/><circle cx="801.7" cy="15.1" r="6" fill="#6c6c6c" opacity=".5"/><circle cx="802.8" cy="14.7" r="4.5" fill="#d2d2d2" opacity=".85"/><circle cx="801.2" cy="15.5" r="3.8" fill="#0d0d0d"/><circle cx="842.7" cy="13.2" r="6" fill="#6c6c6c" opacity=".5"/><circle cx="843.8" cy="12.8" r="4.5" fill="#d2d2d2" opacity=".85"/><circle cx="842.2" cy="13.6" r="3.8" fill="#0d0d0d"/><circle cx="231.5" cy="81.5" r="6" fill="#6c6c6c" opacity=".5"/><circle cx="232.6" cy="81.1" r="4.5" fill="#d2d2d2" opacity=".85"/><circle cx="231.0" cy="81.9" r="3.8" fill="#0d0d0d"/><circle cx="269.7" cy="79.5" r="6" fill="#6c6c6c" opacity=".5"/><circle cx="270.8" cy="79.1" r="4.5" fill="#d2d2d2" opacity=".85"/><circle cx="269.2" cy="79.9" r="3.8" fill="#0d0d0d"/><circle cx="311.1" cy="77.5" r="6" fill="#6c6c6c" opacity=".5"/><circle cx="312.2" cy="77.1" r="4.5" fill="#d2d2d2" opacity=".85"/><circle cx="310.6" cy="77.9" r="3.8" fill="#0d0d0d"/><circle cx="352.6" cy="75.5" r="6" fill="#6c6c6c" opacity=".5"/><circle cx="353.7" cy="75.1" r="4.5" fill="#d2d2d2" opacity=".85"/><circle cx="352.1" cy="75.9" r="3.8" fill="#0d0d0d"/><circle cx="394.0" cy="73.6" r="6" fill="#6c6c6c" opacity=".5"/><circle cx="395.1" cy="73.2" r="4.5" fill="#d2d2d2" opacity=".85"/><circle cx="393.5" cy="74.0" r="3.8" fill="#0d0d0d"/><circle cx="435.5" cy="71.6" r="6" fill="#6c6c6c" opacity=".5"/><circle cx="436.6" cy="71.2" r="4.5" fill="#d2d2d2" opacity=".85"/><circle cx="435.0" cy="72.0" r="3.8" fill="#0d0d0d"/><circle cx="476.9" cy="69.6" r="6" fill="#6c6c6c" opacity=".5"/><circle cx="478.0" cy="69.2" r="4.5" fill="#d2d2d2" opacity=".85"/><circle cx="476.4" cy="70.0" r="3.8" fill="#0d0d0d"/><circle cx="518.4" cy="67.6" r="6" fill="#6c6c6c" opacity=".5"/><circle cx="519.5" cy="67.2" r="4.5" fill="#d2d2d2" opacity=".85"/><circle cx="517.9" cy="68.0" r="3.8" fill="#0d0d0d"/><circle cx="559.8" cy="65.6" r="6" fill="#6c6c6c" opacity=".5"/><circle cx="560.9" cy="65.2" r="4.5" fill="#d2d2d2" opacity=".85"/><circle cx="559.3" cy="66.0" r="3.8" fill="#0d0d0d"/><circle cx="601.3" cy="63.7" r="6" fill="#6c6c6c" opacity=".5"/><circle cx="602.4" cy="63.3" r="4.5" fill="#d2d2d2" opacity=".85"/><circle cx="600.8" cy="64.1" r="3.8" fill="#0d0d0d"/><circle cx="642.8" cy="61.7" r="6" fill="#6c6c6c" opacity=".5"/><circle cx="643.9" cy="61.3" r="4.5" fill="#d2d2d2" opacity=".85"/><circle cx="642.3" cy="62.1" r="3.8" fill="#0d0d0d"/><circle cx="684.2" cy="59.7" r="6" fill="#6c6c6c" opacity=".5"/><circle cx="685.3" cy="59.3" r="4.5" fill="#d2d2d2" opacity=".85"/><circle cx="683.7" cy="60.1" r="3.8" fill="#0d0d0d"/><circle cx="725.7" cy="57.7" r="6" fill="#6c6c6c" opacity=".5"/><circle cx="726.8" cy="57.3" r="4.5" fill="#d2d2d2" opacity=".85"/><circle cx="725.2" cy="58.1" r="3.8" fill="#0d0d0d"/><circle cx="767.1" cy="55.7" r="6" fill="#6c6c6c" opacity=".5"/><circle cx="768.2" cy="55.3" r="4.5" fill="#d2d2d2" opacity=".85"/><circle cx="766.6" cy="56.1" r="3.8" fill="#0d0d0d"/><circle cx="808.6" cy="53.7" r="6" fill="#6c6c6c" opacity=".5"/><circle cx="809.7" cy="53.3" r="4.5" fill="#d2d2d2" opacity=".85"/><circle cx="808.1" cy="54.1" r="3.8" fill="#0d0d0d"/><circle cx="850.0" cy="51.8" r="6" fill="#6c6c6c" opacity=".5"/><circle cx="851.1" cy="51.4" r="4.5" fill="#d2d2d2" opacity=".85"/><circle cx="849.5" cy="52.2" r="3.8" fill="#0d0d0d"/><circle cx="231.5" cy="122.6" r="6" fill="#6c6c6c" opacity=".5"/><circle cx="232.6" cy="122.2" r="4.5" fill="#d2d2d2" opacity=".85"/><circle cx="231.0" cy="123.0" r="3.8" fill="#0d0d0d"/><circle cx="270.6" cy="120.5" r="6" fill="#6c6c6c" opacity=".5"/><circle cx="271.7" cy="120.1" r="4.5" fill="#d2d2d2" opacity=".85"/><circle cx="270.1" cy="120.9" r="3.8" fill="#0d0d0d"/><circle cx="312.6" cy="118.4" r="6" fill="#6c6c6c" opacity=".5"/><circle cx="313.7" cy="118.0" r="4.5" fill="#d2d2d2" opacity=".85"/><circle cx="312.1" cy="118.8" r="3.8" fill="#0d0d0d"/><circle cx="354.5" cy="116.4" r="6" fill="#6c6c6c" opacity=".5"/><circle cx="355.6" cy="116.0" r="4.5" fill="#d2d2d2" opacity=".85"/><circle cx="354.0" cy="116.8" r="3.8" fill="#0d0d0d"/><circle cx="396.4" cy="114.3" r="6" fill="#6c6c6c" opacity=".5"/><circle cx="397.5" cy="113.9" r="4.5" fill="#d2d2d2" opacity=".85"/><circle cx="395.9" cy="114.7" r="3.8" fill="#0d0d0d"/><circle cx="438.3" cy="112.2" r="6" fill="#6c6c6c" opacity=".5"/><circle cx="439.4" cy="111.8" r="4.5" fill="#d2d2d2" opacity=".85"/><circle cx="437.8" cy="112.6" r="3.8" fill="#0d0d0d"/><circle cx="480.3" cy="110.2" r="6" fill="#6c6c6c" opacity=".5"/><circle cx="481.4" cy="109.8" r="4.5" fill="#d2d2d2" opacity=".85"/><circle cx="479.8" cy="110.6" r="3.8" fill="#0d0d0d"/><circle cx="522.2" cy="108.1" r="6" fill="#6c6c6c" opacity=".5"/><circle cx="523.3" cy="107.7" r="4.5" fill="#d2d2d2" opacity=".85"/><circle cx="521.7" cy="108.5" r="3.8" fill="#0d0d0d"/><circle cx="564.1" cy="106.1" r="6" fill="#6c6c6c" opacity=".5"/><circle cx="565.2" cy="105.7" r="4.5" fill="#d2d2d2" opacity=".85"/><circle cx="563.6" cy="106.5" r="3.8" fill="#0d0d0d"/><circle cx="606.1" cy="104.0" r="6" fill="#6c6c6c" opacity=".5"/><circle cx="607.2" cy="103.6" r="4.5" fill="#d2d2d2" opacity=".85"/><circle cx="605.6" cy="104.4" r="3.8" fill="#0d0d0d"/><circle cx="648.0" cy="101.9" r="6" fill="#6c6c6c" opacity=".5"/><circle cx="649.1" cy="101.5" r="4.5" fill="#d2d2d2" opacity=".85"/><circle cx="647.5" cy="102.3" r="3.8" fill="#0d0d0d"/><circle cx="689.9" cy="99.9" r="6" fill="#6c6c6c" opacity=".5"/><circle cx="691.0" cy="99.5" r="4.5" fill="#d2d2d2" opacity=".85"/><circle cx="689.4" cy="100.3" r="3.8" fill="#0d0d0d"/><circle cx="731.8" cy="97.8" r="6" fill="#6c6c6c" opacity=".5"/><circle cx="732.9" cy="97.4" r="4.5" fill="#d2d2d2" opacity=".85"/><circle cx="731.3" cy="98.2" r="3.8" fill="#0d0d0d"/><circle cx="773.8" cy="95.7" r="6" fill="#6c6c6c" opacity=".5"/><circle cx="774.9" cy="95.3" r="4.5" fill="#d2d2d2" opacity=".85"/><circle cx="773.3" cy="96.1" r="3.8" fill="#0d0d0d"/><circle cx="815.7" cy="93.7" r="6" fill="#6c6c6c" opacity=".5"/><circle cx="816.8" cy="93.3" r="4.5" fill="#d2d2d2" opacity=".85"/><circle cx="815.2" cy="94.1" r="3.8" fill="#0d0d0d"/><circle cx="857.6" cy="91.6" r="6" fill="#6c6c6c" opacity=".5"/><circle cx="858.7" cy="91.2" r="4.5" fill="#d2d2d2" opacity=".85"/><circle cx="857.1" cy="92.0" r="3.8" fill="#0d0d0d"/><circle cx="231.5" cy="164.1" r="6" fill="#6c6c6c" opacity=".5"/><circle cx="232.6" cy="163.7" r="4.5" fill="#d2d2d2" opacity=".85"/><circle cx="231.0" cy="164.5" r="3.8" fill="#0d0d0d"/><circle cx="271.6" cy="162.0" r="6" fill="#6c6c6c" opacity=".5"/><circle cx="272.7" cy="161.6" r="4.5" fill="#d2d2d2" opacity=".85"/><circle cx="271.1" cy="162.4" r="3.8" fill="#0d0d0d"/><circle cx="314.0" cy="159.9" r="6" fill="#6c6c6c" opacity=".5"/><circle cx="315.1" cy="159.5" r="4.5" fill="#d2d2d2" opacity=".85"/><circle cx="313.5" cy="160.3" r="3.8" fill="#0d0d0d"/><circle cx="356.4" cy="157.7" r="6" fill="#6c6c6c" opacity=".5"/><circle cx="357.5" cy="157.3" r="4.5" fill="#d2d2d2" opacity=".85"/><circle cx="355.9" cy="158.1" r="3.8" fill="#0d0d0d"/><circle cx="398.8" cy="155.6" r="6" fill="#6c6c6c" opacity=".5"/><circle cx="399.9" cy="155.2" r="4.5" fill="#d2d2d2" opacity=".85"/><circle cx="398.3" cy="156.0" r="3.8" fill="#0d0d0d"/><circle cx="441.3" cy="153.4" r="6" fill="#6c6c6c" opacity=".5"/><circle cx="442.4" cy="153.0" r="4.5" fill="#d2d2d2" opacity=".85"/><circle cx="440.8" cy="153.8" r="3.8" fill="#0d0d0d"/><circle cx="483.7" cy="151.3" r="6" fill="#6c6c6c" opacity=".5"/><circle cx="484.8" cy="150.9" r="4.5" fill="#d2d2d2" opacity=".85"/><circle cx="483.2" cy="151.7" r="3.8" fill="#0d0d0d"/><circle cx="526.1" cy="149.1" r="6" fill="#6c6c6c" opacity=".5"/><circle cx="527.2" cy="148.7" r="4.5" fill="#d2d2d2" opacity=".85"/><circle cx="525.6" cy="149.5" r="3.8" fill="#0d0d0d"/><circle cx="568.5" cy="147.0" r="6" fill="#6c6c6c" opacity=".5"/><circle cx="569.6" cy="146.6" r="4.5" fill="#d2d2d2" opacity=".85"/><circle cx="568.0" cy="147.4" r="3.8" fill="#0d0d0d"/><circle cx="610.9" cy="144.8" r="6" fill="#6c6c6c" opacity=".5"/><circle cx="612.0" cy="144.4" r="4.5" fill="#d2d2d2" opacity=".85"/><circle cx="610.4" cy="145.2" r="3.8" fill="#0d0d0d"/><circle cx="653.3" cy="142.7" r="6" fill="#6c6c6c" opacity=".5"/><circle cx="654.4" cy="142.3" r="4.5" fill="#d2d2d2" opacity=".85"/><circle cx="652.8" cy="143.1" r="3.8" fill="#0d0d0d"/><circle cx="695.7" cy="140.5" r="6" fill="#6c6c6c" opacity=".5"/><circle cx="696.8" cy="140.1" r="4.5" fill="#d2d2d2" opacity=".85"/><circle cx="695.2" cy="140.9" r="3.8" fill="#0d0d0d"/><circle cx="738.1" cy="138.4" r="6" fill="#6c6c6c" opacity=".5"/><circle cx="739.2" cy="138.0" r="4.5" fill="#d2d2d2" opacity=".85"/><circle cx="737.6" cy="138.8" r="3.8" fill="#0d0d0d"/><circle cx="780.5" cy="136.2" r="6" fill="#6c6c6c" opacity=".5"/><circle cx="781.6" cy="135.8" r="4.5" fill="#d2d2d2" opacity=".85"/><circle cx="780.0" cy="136.6" r="3.8" fill="#0d0d0d"/><circle cx="822.9" cy="134.1" r="6" fill="#6c6c6c" opacity=".5"/><circle cx="824.0" cy="133.7" r="4.5" fill="#d2d2d2" opacity=".85"/><circle cx="822.4" cy="134.5" r="3.8" fill="#0d0d0d"/><circle cx="865.3" cy="132.0" r="6" fill="#6c6c6c" opacity=".5"/><circle cx="866.4" cy="131.6" r="4.5" fill="#d2d2d2" opacity=".85"/><circle cx="864.8" cy="132.4" r="3.8" fill="#0d0d0d"/><circle cx="231.5" cy="206.2" r="6" fill="#6c6c6c" opacity=".5"/><circle cx="232.6" cy="205.8" r="4.5" fill="#d2d2d2" opacity=".85"/><circle cx="231.0" cy="206.6" r="3.8" fill="#0d0d0d"/><circle cx="272.6" cy="204.0" r="6" fill="#6c6c6c" opacity=".5"/><circle cx="273.7" cy="203.6" r="4.5" fill="#d2d2d2" opacity=".85"/><circle cx="272.1" cy="204.4" r="3.8" fill="#0d0d0d"/><circle cx="315.5" cy="201.8" r="6" fill="#6c6c6c" opacity=".5"/><circle cx="316.6" cy="201.4" r="4.5" fill="#d2d2d2" opacity=".85"/><circle cx="315.0" cy="202.2" r="3.8" fill="#0d0d0d"/><circle cx="358.4" cy="199.5" r="6" fill="#6c6c6c" opacity=".5"/><circle cx="359.5" cy="199.1" r="4.5" fill="#d2d2d2" opacity=".85"/><circle cx="357.9" cy="199.9" r="3.8" fill="#0d0d0d"/><circle cx="401.3" cy="197.3" r="6" fill="#6c6c6c" opacity=".5"/><circle cx="402.4" cy="196.9" r="4.5" fill="#d2d2d2" opacity=".85"/><circle cx="400.8" cy="197.7" r="3.8" fill="#0d0d0d"/><circle cx="444.2" cy="195.1" r="6" fill="#6c6c6c" opacity=".5"/><circle cx="445.3" cy="194.7" r="4.5" fill="#d2d2d2" opacity=".85"/><circle cx="443.7" cy="195.5" r="3.8" fill="#0d0d0d"/><circle cx="487.1" cy="192.9" r="6" fill="#6c6c6c" opacity=".5"/><circle cx="488.2" cy="192.5" r="4.5" fill="#d2d2d2" opacity=".85"/><circle cx="486.6" cy="193.3" r="3.8" fill="#0d0d0d"/><circle cx="530.0" cy="190.6" r="6" fill="#6c6c6c" opacity=".5"/><circle cx="531.1" cy="190.2" r="4.5" fill="#d2d2d2" opacity=".85"/><circle cx="529.5" cy="191.0" r="3.8" fill="#0d0d0d"/><circle cx="572.9" cy="188.4" r="6" fill="#6c6c6c" opacity=".5"/><circle cx="574.0" cy="188.0" r="4.5" fill="#d2d2d2" opacity=".85"/><circle cx="572.4" cy="188.8" r="3.8" fill="#0d0d0d"/><circle cx="615.7" cy="186.2" r="6" fill="#6c6c6c" opacity=".5"/><circle cx="616.8" cy="185.8" r="4.5" fill="#d2d2d2" opacity=".85"/><circle cx="615.2" cy="186.6" r="3.8" fill="#0d0d0d"/><circle cx="658.6" cy="183.9" r="6" fill="#6c6c6c" opacity=".5"/><circle cx="659.7" cy="183.5" r="4.5" fill="#d2d2d2" opacity=".85"/><circle cx="658.1" cy="184.3" r="3.8" fill="#0d0d0d"/><circle cx="701.5" cy="181.7" r="6" fill="#6c6c6c" opacity=".5"/><circle cx="702.6" cy="181.3" r="4.5" fill="#d2d2d2" opacity=".85"/><circle cx="701.0" cy="182.1" r="3.8" fill="#0d0d0d"/><circle cx="744.4" cy="179.5" r="6" fill="#6c6c6c" opacity=".5"/><circle cx="745.5" cy="179.1" r="4.5" fill="#d2d2d2" opacity=".85"/><circle cx="743.9" cy="179.9" r="3.8" fill="#0d0d0d"/><circle cx="787.3" cy="177.2" r="6" fill="#6c6c6c" opacity=".5"/><circle cx="788.4" cy="176.8" r="4.5" fill="#d2d2d2" opacity=".85"/><circle cx="786.8" cy="177.6" r="3.8" fill="#0d0d0d"/><circle cx="830.2" cy="175.0" r="6" fill="#6c6c6c" opacity=".5"/><circle cx="831.3" cy="174.6" r="4.5" fill="#d2d2d2" opacity=".85"/><circle cx="829.7" cy="175.4" r="3.8" fill="#0d0d0d"/><circle cx="231.5" cy="249.7" r="6" fill="#6c6c6c" opacity=".5"/><circle cx="232.6" cy="249.3" r="4.5" fill="#d2d2d2" opacity=".85"/><circle cx="231.0" cy="250.1" r="3.8" fill="#0d0d0d"/><circle cx="273.7" cy="247.4" r="6" fill="#6c6c6c" opacity=".5"/><circle cx="274.8" cy="247.0" r="4.5" fill="#d2d2d2" opacity=".85"/><circle cx="273.2" cy="247.8" r="3.8" fill="#0d0d0d"/><circle cx="317.1" cy="245.1" r="6" fill="#6c6c6c" opacity=".5"/><circle cx="318.2" cy="244.7" r="4.5" fill="#d2d2d2" opacity=".85"/><circle cx="316.6" cy="245.5" r="3.8" fill="#0d0d0d"/><circle cx="360.5" cy="242.8" r="6" fill="#6c6c6c" opacity=".5"/><circle cx="361.6" cy="242.4" r="4.5" fill="#d2d2d2" opacity=".85"/><circle cx="360.0" cy="243.2" r="3.8" fill="#0d0d0d"/><circle cx="403.8" cy="240.4" r="6" fill="#6c6c6c" opacity=".5"/><circle cx="404.9" cy="240.0" r="4.5" fill="#d2d2d2" opacity=".85"/><circle cx="403.3" cy="240.8" r="3.8" fill="#0d0d0d"/><circle cx="447.2" cy="238.1" r="6" fill="#6c6c6c" opacity=".5"/><circle cx="448.3" cy="237.7" r="4.5" fill="#d2d2d2" opacity=".85"/><circle cx="446.7" cy="238.5" r="3.8" fill="#0d0d0d"/><circle cx="490.6" cy="235.8" r="6" fill="#6c6c6c" opacity=".5"/><circle cx="491.7" cy="235.4" r="4.5" fill="#d2d2d2" opacity=".85"/><circle cx="490.1" cy="236.2" r="3.8" fill="#0d0d0d"/><circle cx="534.0" cy="233.5" r="6" fill="#6c6c6c" opacity=".5"/><circle cx="535.1" cy="233.1" r="4.5" fill="#d2d2d2" opacity=".85"/><circle cx="533.5" cy="233.9" r="3.8" fill="#0d0d0d"/><circle cx="577.4" cy="231.2" r="6" fill="#6c6c6c" opacity=".5"/><circle cx="578.5" cy="230.8" r="4.5" fill="#d2d2d2" opacity=".85"/><circle cx="576.9" cy="231.6" r="3.8" fill="#0d0d0d"/><circle cx="620.8" cy="228.9" r="6" fill="#6c6c6c" opacity=".5"/><circle cx="621.9" cy="228.5" r="4.5" fill="#d2d2d2" opacity=".85"/><circle cx="620.3" cy="229.3" r="3.8" fill="#0d0d0d"/><circle cx="664.2" cy="226.5" r="6" fill="#6c6c6c" opacity=".5"/><circle cx="665.3" cy="226.1" r="4.5" fill="#d2d2d2" opacity=".85"/><circle cx="663.7" cy="226.9" r="3.8" fill="#0d0d0d"/><circle cx="707.6" cy="224.2" r="6" fill="#6c6c6c" opacity=".5"/><circle cx="708.7" cy="223.8" r="4.5" fill="#d2d2d2" opacity=".85"/><circle cx="707.1" cy="224.6" r="3.8" fill="#0d0d0d"/><circle cx="750.9" cy="221.9" r="6" fill="#6c6c6c" opacity=".5"/><circle cx="752.0" cy="221.5" r="4.5" fill="#d2d2d2" opacity=".85"/><circle cx="750.4" cy="222.3" r="3.8" fill="#0d0d0d"/><circle cx="794.3" cy="219.6" r="6" fill="#6c6c6c" opacity=".5"/><circle cx="795.4" cy="219.2" r="4.5" fill="#d2d2d2" opacity=".85"/><circle cx="793.8" cy="220.0" r="3.8" fill="#0d0d0d"/><circle cx="837.7" cy="217.3" r="6" fill="#6c6c6c" opacity=".5"/><circle cx="838.8" cy="216.9" r="4.5" fill="#d2d2d2" opacity=".85"/><circle cx="837.2" cy="217.7" r="3.8" fill="#0d0d0d"/>
<path d="M0 80 h80 q10 1 10 11 v72 q0 9 -8 10 l-4 1 H0z" fill="#7e1428"/>
<path d="M0 134 h77 q6 1 6 8 v22 q0 6 -6 7 H0z" fill="url(#red2)"/>
<path d="M0 167 h78 l-3 5 H0z" fill="#d2506e"/>
<path d="M0 112 h50 v10 H0z" fill="#b01838"/>
<rect x="37" y="63" width="40" height="60" rx="3" fill="#151515"/>
<rect x="58" y="65" width="17" height="56" fill="#1f1f1f"/>
<circle cx="53" cy="113" r="1.200" fill="#ddd"/>
<path d="M0 56 h30 l5 5 v45 l-5 5 H0z" fill="#b7b4aa"/>
<path d="M0 62 h24 l3.500 3.500 v36 l-3.500 3.500 H0z" fill="#35333a"/>
<path d="M20 100 l4 -7 h-8z" fill="#e0c030"/>
<text x="0" y="73" font-size="8.500" fill="#e8e8e8" font-family="Liberation Sans,sans-serif" transform="rotate(180 11 70)">785 n</text>
<rect x="0" y="121" width="74" height="14" fill="#0c0c0c"/>
<rect x="46" y="137" width="13" height="4.500" rx="2" fill="#3a0a14"/>
<circle cx="3" cy="145" r="8" fill="#c4c4c4"/><circle cx="3" cy="145" r="4.500" fill="#8c8c8c"/>
<circle cx="35.500" cy="143" r="2.600" fill="#98102a"/>
<path d="M10 152 h66" stroke="#d8486a" stroke-width="1.200" opacity=".6"/>
<path d="M404 134.0 L757 122.0 L759 136.0 L404 147.5 z" fill="#3c3c3c" opacity=".75"/>
<path d="M404 69.0 L470 65.7 L471 64.0 L757 49.0 L759 130.5 L404 141.5 z" fill="#0d0d0d"/>
<path d="M404 73.5 L757 55.5 L757 62.0 L404 80.0 z" fill="#1c1c1c"/>
<path d="M404 80.5 L757 62.5" stroke="#3a3a3a" stroke-width="1.300"/>
<path d="M404 106.0 L757 89.0 L757 94.0 L404 111.0 z" fill="#1e1e1e"/>
<path d="M404 134.0 L757 122.0" stroke="#303030" stroke-width="1.600"/>
<rect x="423.5" y="91.1" width="8.600" height="5" rx="2" fill="#a2a2a2" transform="rotate(-6 427.8 93.6)"/><rect x="456.9" y="89.4" width="8.600" height="5" rx="2" fill="#a2a2a2" transform="rotate(-6 461.2 91.9)"/><rect x="490.4" y="87.8" width="8.600" height="5" rx="2" fill="#a2a2a2" transform="rotate(-6 494.7 90.3)"/><rect x="523.8" y="86.1" width="8.600" height="5" rx="2" fill="#a2a2a2" transform="rotate(-6 528.1 88.6)"/><rect x="557.2" y="84.4" width="8.600" height="5" rx="2" fill="#a2a2a2" transform="rotate(-6 561.5 86.9)"/><rect x="590.7" y="82.8" width="8.600" height="5" rx="2" fill="#a2a2a2" transform="rotate(-6 595.0 85.2)"/><rect x="624.1" y="81.1" width="8.600" height="5" rx="2" fill="#a2a2a2" transform="rotate(-6 628.4 83.6)"/><rect x="657.5" y="79.4" width="8.600" height="5" rx="2" fill="#a2a2a2" transform="rotate(-6 661.8 81.9)"/><rect x="690.9" y="77.7" width="8.600" height="5" rx="2" fill="#a2a2a2" transform="rotate(-6 695.2 80.2)"/><rect x="724.4" y="76.1" width="8.600" height="5" rx="2" fill="#a2a2a2" transform="rotate(-6 728.7 78.6)"/><rect x="425.7" y="123.2" width="8.600" height="5" rx="2" fill="#a2a2a2" transform="rotate(-6 430.0 125.7)"/><rect x="459.4" y="121.6" width="8.600" height="5" rx="2" fill="#a2a2a2" transform="rotate(-6 463.7 124.1)"/><rect x="493.0" y="120.0" width="8.600" height="5" rx="2" fill="#a2a2a2" transform="rotate(-6 497.3 122.5)"/><rect x="526.7" y="118.4" width="8.600" height="5" rx="2" fill="#a2a2a2" transform="rotate(-6 531.0 120.9)"/><rect x="560.4" y="116.8" width="8.600" height="5" rx="2" fill="#a2a2a2" transform="rotate(-6 564.7 119.3)"/><rect x="594.1" y="115.2" width="8.600" height="5" rx="2" fill="#a2a2a2" transform="rotate(-6 598.4 117.8)"/><rect x="627.7" y="113.7" width="8.600" height="5" rx="2" fill="#a2a2a2" transform="rotate(-6 632.0 116.2)"/><rect x="661.4" y="112.1" width="8.600" height="5" rx="2" fill="#a2a2a2" transform="rotate(-6 665.7 114.6)"/><rect x="695.1" y="110.5" width="8.600" height="5" rx="2" fill="#a2a2a2" transform="rotate(-6 699.4 113.0)"/><rect x="728.7" y="108.9" width="8.600" height="5" rx="2" fill="#a2a2a2" transform="rotate(-6 733.0 111.4)"/>
<rect x="714" y="83" width="33" height="15" rx="2" fill="url(#sil)"/>
<path d="M722 83 v15M727 83 v15M732 83 v15M737 83 v15" stroke="#555" stroke-width="1.2"/>
<path d="M747 90.0 h9" stroke="#ccc" stroke-width="2"/>
<rect x="760" y="68" width="18" height="33" fill="#a9abad"/>
<rect x="776" y="68" width="42" height="31" fill="#161616"/>
<rect x="817" y="68" width="18" height="31" fill="#9d9fa1"/>
<path d="M752 103.5 L864 100.0 L864 176.0 L756 182.0 z" fill="#1b1b1b"/>
<path d="M784 107.0 L848 105.0 L848 125.0 L784 127.0 z" fill="#4a4a4a"/>
<path d="M788 111.0 h56M788 116.0 h56M788 121.0 h40" stroke="#9a9a9a" stroke-width="1.6" opacity=".8"/>
<circle cx="860" cy="133.5" r="6" fill="#3cff5a" opacity=".35"/><circle cx="860" cy="133.5" r="3.6" fill="#7dff8a"/>
<path d="M788 155.0 h26M818 154.0 h20M842 153.0 h20" stroke="#cfcfcf" stroke-width="1.4"/>
<path d="M792 160.0 v6M800 160.0 v6" stroke="#cfcfcf" stroke-width="1.6"/>
<circle cx="773" cy="172.0" r="2.8" fill="#9a9a9a"/><circle cx="756" cy="73.0" r="2.2" fill="#8a8a8a"/><circle cx="757" cy="99.0" r="2.2" fill="#8a8a8a"/>
<rect x="785" y="177" width="20" height="12" fill="#3a3a3a"/>
<rect x="816" y="177" width="20" height="18" fill="#8a8a8a"/>
<path d="M816 182 h20M816 186 h20M816 190 h20" stroke="#444" stroke-width="1.2"/>
<path d="M787 188 h18 l3 22 l-3 30 h-16 l-3 -28z" fill="#0f0f0f"/>
<path d="M815 194 h22 l4 24 l-5 40 h-16 l-6 -36z" fill="#0f0f0f"/>
<path d="M796 236 v30" stroke="#0f0f0f" stroke-width="5"/>
<path d="M826 250 q2 12 8 20" stroke="#0f0f0f" stroke-width="6" fill="none"/>
<path d="M228 70 q0 -6 8 -7 h52 v63 h-52 q-8 -1 -8 -8z" fill="url(#lens)"/>
<rect x="288" y="64" width="18" height="56" fill="#0c0c0c"/>
<rect x="253" y="63" width="2" height="62" fill="#2c2c2c"/>
<rect x="304" y="72" width="12" height="66" fill="#141414"/>
<path d="M270 120 h40 v26 l-8 4 h-30z" fill="#121212"/>
<path d="M287 129 l14 0 l6 22 h-14z" fill="#8c8c8c"/>
<circle cx="283" cy="138" r="4" fill="#9a9a9a"/><circle cx="278" cy="122" r="3" fill="#777"/>
<rect x="314" y="65" width="54" height="80" fill="url(#red)"/>
<circle cx="335" cy="127" r="5" fill="#5a0c18"/><circle cx="335" cy="127" r="2.2" fill="#a08080"/>
<rect x="300" y="144" width="105" height="5" fill="#1a1a1a"/><rect x="316" y="148" width="88" height="2" fill="#cfcfcf" opacity=".8"/>
<rect x="333.5" y="58" width="9.5" height="57" rx="3" fill="#2f78d8"/>
<path d="M334 61.0h9M334 64.1h9M334 67.2h9M334 70.3h9M334 73.4h9M334 76.5h9M334 79.6h9M334 82.7h9M334 85.8h9M334 88.9h9M334 92.0h9M334 95.1h9M334 98.2h9M334 101.3h9M334 104.4h9M334 107.5h9M334 110.6h9" stroke="#9cc4f4" stroke-width=".9"/>
<rect x="344" y="58" width="18" height="56" rx="2" fill="#b01c30"/>
<path d="M344 61.0h9M344 64.1h9M344 67.2h9M344 70.3h9M344 73.4h9M344 76.5h9M344 79.6h9M344 82.7h9M344 85.8h9M344 88.9h9M344 92.0h9M344 95.1h9M344 98.2h9M344 101.3h9M344 104.4h9M344 107.5h9M344 110.6h9" stroke="#5c0c18" stroke-width="1"/>
<rect x="352" y="58" width="10" height="56" fill="#3a2a2c" opacity=".75"/>
<rect x="366" y="119" width="16" height="24" fill="#74767b"/>
<path d="M362 36 q0 -5 5 -5 h34 q5 0 5 5 v96 q0 6 -6 6 h-10 q-4 0 -6 -4 l-3 -9 h-13 q-6 0 -6 -6z" fill="url(#cam)"/>
<path d="M363 33 h42" stroke="#b5b7ba" stroke-width="1.5"/>
<circle cx="374" cy="75" r="2.2" fill="#4a4c50"/>
<rect x="380" y="122" width="9" height="34" fill="#2a2a2a"/>
<rect x="381" y="156" width="12" height="30" fill="#1a1a1a"/>
<path d="M381 168 h12M381 180 h12" stroke="#888" stroke-width="1.4"/>
<path d="M389 186 q2 36 24 58 t30 24" fill="none" stroke="#0c0c0c" stroke-width="7"/>
</svg>
<!-- ===== M2 Measurement window ===== -->
<style>
.m2{position:absolute;left:908px;top:31px;width:830px;height:875px;background:#f0f0f0;box-shadow:0 0 14px rgba(0,0,0,.35),0 0 1px rgba(0,0,0,.5)}
.mr{position:absolute;height:28px;border-bottom:2px solid #0c0c0c;box-sizing:border-box;background:linear-gradient(#c4c4c4 0%,#e9e9e9 18%,#fdfdfd 38%,#fff 55%,#e2e2e2 78%,#bdbdbd 100%);font-weight:bold;font-size:16px}
.mr span{position:absolute;white-space:nowrap;line-height:1;top:8.500px}
.mr .l{left:19px}.mr .v{right:9px}
.gb{position:absolute;border:1px solid #b2b2b2;box-shadow:inset 1px 1px 0 #fff,1px 1px 0 #fff}
.wb{position:absolute;background:#f0f0f0;border:1px solid #fff;border-right-color:#696969;border-bottom-color:#696969;box-shadow:inset -1px -1px 0 #a0a0a0,.5px .5px 0 #777;font-size:13.500px;letter-spacing:-.15px;text-align:center;white-space:nowrap;color:#111}
.m2 .t{font-size:14px;color:#111}
.m2 .rs{font-size:13.500px;letter-spacing:-.35px}
</style>
<div class="m2">
 <div class="a" style="left:0;top:0;width:830px;height:37px;background:linear-gradient(#fff 0,#fff 70%,#f4f4f4 100%)"></div>
 <div class="a" style="left:10px;top:12px;width:18px;height:14px;border:1px solid #b8c4c0;background:#f4f6f5"></div>
 <div class="a" style="left:12px;top:14px;width:8px;height:10px;background:#5e8f86"></div>
 <div class="a" style="left:23px;top:13px;width:1px;height:12px;background:#c4cfcc"></div>
 <div class="t" style="letter-spacing:0.250px;left:35px;top:11.800px;font-size:16px;color:#aaa">M2 Measurement</div>
 <div class="a" style="left:781px;top:0;width:49px;height:37px;background:#f2a3ad"></div>
 <svg class="a" style="left:796px;top:13px" width="12" height="12" viewBox="0 0 12 12"><path d="M1 1l10 10M11 1L1 11" stroke="#f7b9c0" stroke-width="1.500"/></svg>
 <!-- left group rows -->
 <div class="a" style="left:13.500px;top:52.500px;width:397.500px;height:199.500px;background:#0c0c0c"></div>
 <div class="mr" style="left:15px;top:54px;width:393px;height:27px"><span class="l" style="letter-spacing:-0.050px">M^2_u</span><span class="v" style="letter-spacing:0.305px">1.11+/-0.11</span></div>
 <div class="mr" style="left:15px;top:81px;width:393px"><span class="l">2Wo_u</span><span class="v">328.2 um</span></div>
 <div class="mr" style="left:15px;top:109px;width:393px"><span class="l">Zo_u</span><span class="v">97.53 mm</span></div>
 <div class="mr" style="left:15px;top:137px;width:393px"><span class="l">Zr_u</span><span class="v">75.32 mm</span></div>
 <div class="mr" style="left:15px;top:165px;width:393px"><span class="l">Theta_u</span><span class="v">4.36 mr</span></div>
 <div class="mr" style="left:15px;top:193px;width:393px"><span class="l">Astigmatism</span><span class="v">0.012</span></div>
 <!-- right group rows -->
 <div class="a" style="left:415.500px;top:52.500px;width:392.500px;height:170.500px;background:#0c0c0c"></div>
 <div class="mr" style="left:417px;top:54px;width:390px;height:27px"><span class="l" style="letter-spacing:0.125px">M^2_v</span><span class="v" style="letter-spacing:0.327px">1.36+/-0.14</span></div>
 <div class="mr" style="left:417px;top:81px;width:390px"><span class="l">2Wo_v</span><span class="v">178.8 um</span></div>
 <div class="mr" style="left:417px;top:109px;width:390px"><span class="l">Zo_v</span><span class="v">98.66 mm</span></div>
 <div class="mr" style="left:417px;top:137px;width:390px"><span class="l">Zr_v</span><span class="v">23.46 mm</span></div>
 <div class="mr" style="left:417px;top:165px;width:390px"><span class="l">Theta_v</span><span class="v">7.62 mr</span></div>
 <div class="mr" style="left:417px;top:193px;width:390px"><span class="l">Asymmetry</span><span class="v">0.004</span></div>
 <!-- ruler -->
 <div class="a" style="left:417px;top:220.500px;width:393px;height:37px;background:#5a5a5a;overflow:hidden">
  <div class="a" style="left:.200px;top:0;width:393px;height:9.500px;background:repeating-linear-gradient(90deg,#f6f6f6 0,#f6f6f6 1.400px,transparent 1.400px,transparent 4.010px)"></div>
  <div class="a" style="left:12.300px;top:0;width:393px;height:17px;background:repeating-linear-gradient(90deg,#f6f6f6 0,#f6f6f6 1.300px,transparent 1.300px,transparent 40.100px)"></div>
  <div class="a" style="left:32.400px;top:0;width:393px;height:23.500px;background:repeating-linear-gradient(90deg,#f6f6f6 0,#f6f6f6 1.300px,transparent 1.300px,transparent 40.100px)"></div>
  <div class="a" style="left:0;top:0;width:393px;height:1.200px;background:#e8e8e8"></div><div class="t" style="letter-spacing:-0.470px;left:289px;top:21.500px;font-size:17px;color:#fff">200.00mm–&gt;</div>
  <svg class="a" style="left:383px;top:0" width="10" height="37" viewBox="0 0 10 37"><path d="M10 6v21H5.500z" fill="#f6f6f6"/></svg>
 </div>
 <!-- right-side option groups -->
 <div class="gb" style="left:420px;top:266px;width:384px;height:48px"></div>
 <div class="t" style="left:668px;top:259px;background:#f0f0f0;padding:0 3px 0 2px" >Enable</div>
 <div class="t" style="left:675px;top:276px;font-size:13.5px">u Fit =</div><div class="t" style="letter-spacing:-0.414px;left:724px;top:277px;font-size:13px">93.9 %</div>
 <div class="t" style="left:676px;top:295px;font-size:13.5px">v Fit =</div><div class="t" style="letter-spacing:-0.414px;left:724px;top:296px;font-size:13px">96.8 %</div>
 <div class="gb" style="left:420px;top:325px;width:384px;height:68px"></div>
 <div class="t rs" style="right:54.700px;top:335.700px">Use clip widths (x/y)</div>
 <div class="t rs" style="right:44px;top:355.200px">Use ISO_major/minor</div>
 <div class="t rs" style="right:65px;top:374.900px">Use Effective Slits</div>
 <div class="gb" style="left:420px;top:403px;width:384px;height:67px"></div>
 <div class="t rs" style="right:76px;top:412.900px">Fit (Hyperbolic)</div>
 <div class="t rs" style="right:101.600px;top:432.900px">Divergence</div>
 <div class="t rs" style="right:92.700px;top:453.200px">Focus Finder</div>
 <div class="t rs" style="right:27.500px;top:476.800px">Z axis as (Z - Zo_u)/Zr_u</div>
 <div class="t rs" style="right:105.200px;top:494.900px">3D display</div>
 <div class="a" style="left:600px;top:512px;width:222px;height:1px;background:#cfcfcf;box-shadow:0 1px 0 #fff"></div>
 <div class="t rs" style="right:58px;top:517.900px">Auto USB mode</div>
 <div class="wb" style="left:560px;top:539px;width:252px;height:26px;line-height:24px;text-align:right;padding-right:31px;font-size:13.500px">Decrement Sample</div>
 <div class="wb" style="left:560px;top:566px;width:252px;height:26px;line-height:24px;text-align:right;padding-right:10px;font-size:13.500px">&lt;&lt; Increment Sample <b style="letter-spacing:-1px">&gt;&gt;</b></div>
 <div class="gb" style="left:420px;top:597px;width:386px;height:44px"></div>
 <div class="t" style="right:59px;top:603.500px;font-size:13px;letter-spacing:-.25px">Asymmetry = 1.836</div>
 <div class="t" style="right:69px;top:623.500px;font-size:13px;letter-spacing:-.25px">Symmetry = 0.445</div>
 <div class="gb" style="left:14px;top:650px;width:792px;height:62px"></div>
 <!-- notes group -->
 <div class="gb" style="left:14px;top:722px;width:792px;height:110px"></div>
 <div class="t" style="letter-spacing:-0.050px;left:22px;top:715px;background:#f0f0f0;padding:0 3px;font-size:13.5px">Notes and Report Generation</div>
 <div class="t" style="letter-spacing:0.097px;left:24px;top:741px;font-size:13px">No notes entered.</div>
 <div class="wb" style="left:717px;top:739px;width:84px;height:33px;line-height:31px">Edit Notes</div>
 <div class="wb" style="left:717px;top:776px;width:84px;height:35px;line-height:16px;padding-top:1px;white-space:normal">Generate Report</div>
 <!-- bottom buttons -->
 <div class="wb" style="left:22px;top:837px;width:81px;height:27px;line-height:25px">Setup</div>
 <div class="wb" style="left:109.500px;top:837px;width:81px;height:27px;line-height:25px">Auto Setup</div>
 <div class="wb" style="left:196px;top:837px;width:81px;height:27px;line-height:25px">Start M2</div>
 <div class="wb" style="left:283.500px;top:837px;width:81px;height:27px;line-height:25px;color:#a0a0a0;text-shadow:1px 1px 0 #fff">Pause</div>
 <div class="wb" style="left:370px;top:837px;width:81px;height:27px;line-height:25px">Re-Calc</div>
 <div class="wb" style="left:456px;top:837px;width:81px;height:27px;line-height:25px">Save</div>
 <div class="wb" style="left:542px;top:837px;width:81px;height:27px;line-height:25px">Recall</div>
 <div class="wb" style="left:627.500px;top:837px;width:81px;height:27px;line-height:25px;letter-spacing:-.3px">Export Data</div>
 <div class="wb" style="left:714.500px;top:837px;width:81px;height:27px;line-height:25px;letter-spacing:-.3px">Export CSV</div>
</div>
<!-- ===== Save As dialog ===== -->
<style>
.dlg{position:absolute;left:654px;top:133px;width:942px;height:590px;background:#fff;box-shadow:0 2px 18px rgba(0,0,0,.45),0 0 0 1px rgba(90,90,90,.55);font-family:"Liberation Sans","Noto Sans CJK SC",sans-serif}
.dlg .t{font-size:15px;color:#1a1a1a}
.nv{position:absolute;left:65px;font-size:15px;white-space:nowrap;line-height:1;color:#1a1a1a}
.fl{position:absolute;width:130px;text-align:center;font-size:15px;line-height:1;color:#1a1a1a;white-space:nowrap}
</style>
<div class="dlg">
 <div class="t" style="letter-spacing:-0.005px;left:9px;top:11px;font-size:15px;color:#000">另存为</div>
 <svg class="a" style="left:913px;top:11px" width="16" height="16" viewBox="0 0 16 16"><path d="M2 2l12 12M14 2L2 14" stroke="#222" stroke-width="1.2"/></svg>
 <!-- nav arrows -->
 <svg class="a" style="left:14px;top:52px" width="120" height="22" viewBox="0 0 120 22"><path d="M4 11h14M4 11l5-5M4 11l5 5" stroke="#dedede" stroke-width="1.4" fill="none"/><path d="M43 11h14M57 11l-5-5M57 11l-5 5" stroke="#dedede" stroke-width="1.4" fill="none"/><path d="M76 9.500l3 3 3-3" stroke="#e0e0e0" stroke-width="1.2" fill="none"/><path d="M103 19V4M103 4l-6 6M103 4l6 6" stroke="#5a5a5a" stroke-width="1.5" fill="none"/></svg>
 <!-- address bar -->
 <div class="a" style="left:135px;top:44px;width:488px;height:38px;border:1px solid #d9d9d9;background:#fff"></div>
 <div class="a" style="left:623px;top:44px;width:41px;height:38px;border:1px solid #d9d9d9;border-left:none;background:#fff"></div>
 <svg class="a" style="left:140px;top:53px" width="14" height="18" viewBox="0 0 14 18"><path d="M1 3h5l1 1.500h6V17H1z" fill="#f7d978"/><path d="M1 6h12v11H1z" fill="#fbe79c"/></svg>
 <svg class="a" style="left:164px;top:57px" width="8" height="10" viewBox="0 0 8 10"><path d="M2 1l4 4-4 4" stroke="#6a6a6a" stroke-width="1.3" fill="none"/></svg>
 <div class="t" style="letter-spacing:-0.005px;left:182px;top:55px">此电脑</div>
 <svg class="a" style="left:237px;top:57px" width="8" height="10" viewBox="0 0 8 10"><path d="M2 1l4 4-4 4" stroke="#6a6a6a" stroke-width="1.3" fill="none"/></svg>
 <div class="t" style="letter-spacing:-0.149px;left:253px;top:55px">本地磁盘 (E:)</div>
 <svg class="a" style="left:350px;top:57px" width="8" height="10" viewBox="0 0 8 10"><path d="M2 1l4 4-4 4" stroke="#6a6a6a" stroke-width="1.3" fill="none"/></svg>
 <div class="t" style="letter-spacing:-0.008px;left:367px;top:55px">下载</div>
 <svg class="a" style="left:407px;top:57px" width="8" height="10" viewBox="0 0 8 10"><path d="M2 1l4 4-4 4" stroke="#6a6a6a" stroke-width="1.3" fill="none"/></svg>
 <svg class="a" style="left:595px;top:59px" width="14" height="9" viewBox="0 0 14 9"><path d="M1.500 1.500l5.500 5.500 5.500-5.500" stroke="#555" stroke-width="1.4" fill="none"/></svg>
 <svg class="a" style="left:635px;top:54px" width="18" height="18" viewBox="0 0 18 18"><path d="M14.500 9a5.500 5.500 0 1 1-2.300-4.500" stroke="#666" stroke-width="1.3" fill="none"/><path d="M9.500 1.800l3.300 2.600-3.800 1.600" stroke="#666" stroke-width="1.3" fill="none"/></svg>
 <!-- search -->
 <div class="a" style="left:677px;top:44px;width:254px;height:38px;border:1px solid #d9d9d9;background:#fff"></div>
 <svg class="a" style="left:694px;top:54px" width="18" height="18" viewBox="0 0 18 18"><circle cx="11" cy="7" r="4.600" stroke="#8a8a8a" stroke-width="1.2" fill="none"/><path d="M7.600 10.400L2 16" stroke="#8a8a8a" stroke-width="1.3"/></svg>
 <div class="t" style="letter-spacing:0.557px;left:728px;top:55px;color:#7a7a7a">搜索"下载"</div>
 <!-- toolbar band -->
 <div class="a" style="left:0;top:89px;width:942px;height:40px;background:#f5f6f7"></div>
 <div class="t" style="letter-spacing:-0.008px;left:22px;top:101px">组织</div>
 <div class="a" style="left:57px;top:106px;border:4px solid transparent;border-top:4.500px solid #333;width:0;height:0"></div>
 <div class="t" style="letter-spacing:-0.003px;left:102px;top:101px">新建文件夹</div>
 <div class="a" style="left:826px;top:102px;width:18px;height:13px;border:1px solid #8fa3b8;background:linear-gradient(#dfeaf5 0,#dfeaf5 45%,#3f6a64 45%,#5d8a7c 100%)"></div>
 <div class="a" style="left:857px;top:106px;border:4px solid transparent;border-top:4.500px solid #333;width:0;height:0"></div>
 <div class="a" style="left:902px;top:97px;width:21px;height:21px;border-radius:50%;background:#1a6fc4;color:#fff;font-size:15px;font-weight:bold;text-align:center;line-height:21px">?</div>
 <!-- nav pane -->
 <div class="a" style="left:0;top:399px;width:173px;height:30px;background:#d9d9d9"></div>
 <div class="a" style="left:176px;top:129px;width:18px;height:310px;background:#f0f0f0"></div>
 <div class="a" style="left:176px;top:313px;width:18px;height:92px;background:#c9c9c9"></div>
 <svg class="a" style="left:179px;top:133px" width="12" height="8" viewBox="0 0 12 8"><path d="M1 7l5-5 5 5" stroke="#555" stroke-width="1.4" fill="none"/></svg>
 <svg class="a" style="left:179px;top:424px" width="12" height="8" viewBox="0 0 12 8"><path d="M1 1l5 5 5-5" stroke="#555" stroke-width="1.4" fill="none"/></svg>
 <div class="nv" style="top:136px">3D 对象</div>
 <div class="nv" style="top:166px">视频</div>
 <div class="nv" style="top:196px">图片</div>
 <div class="nv" style="top:226px">文档</div>
 <div class="nv" style="top:256px">下载</div>
 <div class="nv" style="top:286px">音乐</div>
 <div class="nv" style="top:316px">桌面</div>
 <div class="nv" style="top:346px">系统 (C:)</div>
 <div class="nv" style="top:376px">本地磁盘 (D:)</div>
 <div class="nv" style="top:406px">本地磁盘 (E:)</div>
 <!-- nav icons -->
 <svg class="a" style="left:40px;top:132px" width="20" height="300" viewBox="0 0 20 300">
  <path d="M3 6l8-3 7 3v11l-7 3-8-3z" fill="#35c0d0"/><path d="M11 3l7 3v11l-7 3z" fill="#1e9eb4"/><path d="M3 6l8-3 7 3-7 2z" fill="#8fe6ee"/>
  <rect x="2" y="34" width="16" height="18" fill="#3a3f4a"/><rect x="5" y="36" width="10" height="14" fill="#6d8ec4"/><path d="M5 44l4-3 6 5v4H5z" fill="#5c7a3a"/><path d="M3 35v16M17 35v16" stroke="#cfd3da" stroke-width="1.4" stroke-dasharray="2 2"/>
  <rect x="1.500" y="66" width="17" height="14" fill="#eef3f8" stroke="#9aa9b8" stroke-width="1"/><rect x="3" y="68" width="14" height="10" fill="#c8dcee"/><path d="M3 76l4-4 3 2 3-3 4 3v2H3z" fill="#5a7a6c"/>
  <path d="M3 94h11l3 3v15H3z" fill="#fbfbfb" stroke="#8a8f96" stroke-width="1"/><path d="M5.500 99h8M5.500 102h9M5.500 105h9M5.500 108h9" stroke="#8aa0b6" stroke-width="1"/>
  <path d="M6.500 123h7v8h4.500l-8 9-8-9h4.500z" fill="#2f8fdf"/><path d="M6.500 123h7v3h-7z" fill="#6db7ee"/>
  <path d="M11 152v14.500a3.200 3.200 0 1 1-1.800-2.800V152c4 1 6 3 6 7-1.500-2-3-3-4.200-3z" fill="#2a9fd0"/>
  <rect x="1" y="185" width="18" height="13" rx="1" fill="#1e8fe0"/><rect x="2.500" y="186.500" width="15" height="8" fill="#36a6f4"/><path d="M3 196h3M8 196h2" stroke="#cfe8fb" stroke-width="1"/>
  <path d="M1 223l3-5h12l3 5v3H1z" fill="#d9dde1"/><path d="M1 223h18v4H1z" fill="#9aa2aa"/><path d="M3 214h3v3H3zM7 214h3v3H7zM3 218h3v3H3zM7 218h3v3H7z" fill="#1e9ee8"/>
  <path d="M1 253l3-5h12l3 5v3H1z" fill="#e3e6e9"/><path d="M1 253h18v4H1z" fill="#8f979f"/>
  <path d="M1 283l3-5h12l3 5v3H1z" fill="#e3e6e9"/><path d="M1 283h18v4H1z" fill="#8f979f"/>
 </svg>
 <!-- files -->
 <svg class="a" style="left:230px;top:145px" width="700" height="270" viewBox="0 0 700 270">
 <defs>
  <linearGradient id="ff" x1="0" y1="0" x2="1" y2="0"><stop offset="0" stop-color="#fdeeb8"/><stop offset=".6" stop-color="#fae397"/><stop offset="1" stop-color="#f6d981"/></linearGradient>
  <g id="fback"><path d="M0 0h64v96H0z" fill="#f3d475"/><path d="M0 0h64v9H0z" fill="#f7dc84"/></g>
  <g id="fflap"><path d="M0 0l25 9v92L0 89z" fill="url(#ff)"/><path d="M0 89l25 12" stroke="#e9c55c" stroke-width="1" opacity=".6"/></g>
 </defs>
 <!-- folder 1 (origin 12,7) -->
 <g transform="translate(12,7)"><use href="#fback"/>
  <path d="M56 11l22 4v74l-22 5z" fill="#3b3b3d"/><path d="M56 11l22 4v6l-22-3z" fill="#c8182a"/><path d="M57 83l6-1v10l-6 2z" fill="#b01424"/>
  <path d="M58 30h18M58 35h18M58 42h10M58 46h8" stroke="#cfcfcf" stroke-width="1.6"/>
  <path d="M16 6l40 13v81H16z" fill="#f3f3f1"/><path d="M16 6l40 13v5L16 10z" fill="#4a4a4c"/>
  <path d="M16 58l40 10v22l-40-12z" fill="#35b8c4"/><path d="M16 74l40 12v14H16z" fill="#f1f1ef"/>
  <circle cx="45" cy="41" r="7" fill="#f08020"/><circle cx="45" cy="41" r="5" fill="none" stroke="#fbd0a0" stroke-width=".8"/><text x="45" y="45" font-size="9" font-weight="bold" font-family="Liberation Sans,sans-serif" fill="#fff" text-anchor="middle">?</text>
  <circle cx="32" cy="50" r="6.500" fill="#3e3e40"/><text x="32" y="54" font-size="10" font-weight="bold" font-family="Liberation Sans,sans-serif" fill="#fff" text-anchor="middle">1</text>
  <path d="M24 22q6 10 2 22" stroke="#e8c040" stroke-width="3" fill="none"/>
  <path d="M27 66l22 6" stroke="#d8f4f6" stroke-width="2.500"/>
  <use href="#fflap"/></g>
 <!-- folder 12 (origin 156,7) -->
 <g transform="translate(156,7)"><use href="#fback"/>
  <path d="M56 11h22.500v80H65v5H56z" fill="#fdfdfd"/><path d="M56.600 51h12.400v38H56.600z" fill="#0e0e0e"/><path d="M69 66.700h5v21h-5z" fill="#262626"/><path d="M60 60l3 3 3-3" stroke="#aaa" stroke-width="1" fill="none"/>
  <path d="M16.600 3.300l40 7.700v90h-40z" fill="#fefefe"/><path d="M23.300 6.700l14.500 2v5.500l-14.500-2.500z" fill="#0c0c0c"/><path d="M22 14l4-1 14 10 6 11-1 3-6-8-12-9z" fill="#1c1c1c"/><path d="M24.400 17.800h10.600v60h-10.600z" fill="#0c0c0c"/><path d="M41 44l6-2 5 8 4.600 3v32l-6 1-9.600-22z" fill="#161616"/><path d="M43 52l4 9M47 66l4 7" stroke="#e8e8e8" stroke-width="1.800"/><path d="M24.400 74.400l32.200 7.600v3.500l-18.800 1.200-13.400-9z" fill="#2a2a2a"/><circle cx="38.300" cy="90.500" r="1.800" fill="#8a8a8a"/>
  <use href="#fflap"/></g>
 <!-- folder 123 (origin 300,7) -->
 <g transform="translate(300,7)"><use href="#fback"/>
  <path d="M56 11h22.500v80H65v5H56z" fill="#fdfdfd"/><path d="M56.600 51h12.400v38H56.600z" fill="#0e0e0e"/><path d="M69 66.700h5v21h-5z" fill="#262626"/><path d="M60 60l3 3 3-3" stroke="#aaa" stroke-width="1" fill="none"/>
  <path d="M16.600 3.300l40 7.700v90h-40z" fill="#fefefe"/><path d="M23.300 6.700l14.500 2v5.500l-14.500-2.500z" fill="#0c0c0c"/><path d="M22 14l4-1 14 10 6 11-1 3-6-8-12-9z" fill="#1c1c1c"/><path d="M24.400 17.800h10.600v60h-10.600z" fill="#0c0c0c"/><path d="M41 44l6-2 5 8 4.600 3v32l-6 1-9.600-22z" fill="#161616"/><path d="M43 52l4 9M47 66l4 7" stroke="#e8e8e8" stroke-width="1.800"/><path d="M24.400 74.400l32.200 7.600v3.500l-18.800 1.200-13.400-9z" fill="#2a2a2a"/><circle cx="38.300" cy="90.500" r="1.800" fill="#8a8a8a"/>
  <use href="#fflap"/></g>
 <!-- folder DFM (origin 444,7) -->
 <g transform="translate(444,7)"><use href="#fback"/>
  <path d="M55 11h22.500v90H55z" fill="#fbfbfb"/>
  <path d="M18.700 4.400L55 11v90H18.700z" fill="#fefefe"/>
  <path d="M29 10.500L58 14l13 19v54q0 3-3 3H57" fill="none" stroke="#d84848" stroke-width="2"/><circle cx="57.500" cy="49" r="1.600" fill="#d06060"/>
  <path d="M18 11.600L39 19q3.500 1.200 5 5l5.800 12v58q0 3.200-3 2.500L18 84z" fill="#fefefe" stroke="#d84040" stroke-width="2.200"/>
  <path d="M25 57c5-7 7-17 8-23 1 8 5 18 9 21M27 56c5-4 11-4 15 0" fill="none" stroke="#e89090" stroke-width="1.300"/>
  <text x="26" y="80" font-size="14.500" font-weight="bold" font-family="Liberation Sans,sans-serif" fill="#1a1a1a" transform="rotate(4 26 80) scale(.78 1)">PDF</text>
  <use href="#fflap"/></g>
 <!-- folder DwnlData (origin 588,7) -->
 <g transform="translate(588,7)"><path d="M0 0h62v10h8l6 4v82H0z" fill="#f4d678"/><path d="M62 10h8l6 4v82H62z" fill="#f8de8a"/>
  <path d="M48 20h15v76H48z" fill="#f2f2f2"/><path d="M49 26h13M49 31h13M49 36h13M49 41h13M49 46h13" stroke="#b8c8d8" stroke-width="1.600"/><path d="M50 54h12v12H50z" fill="#5aa8dc"/><path d="M50 66h12v5H50z" fill="#2a5a58"/><path d="M49 78h13M49 84h13" stroke="#dcdcdc" stroke-width="1.600"/>
  <path d="M0 0l49 20v78L0 84z" fill="url(#ff)"/></g>
 <!-- folder 新建文件夹 (origin 12,155) -->
 <g transform="translate(12,155)"><use href="#fback"/>
  <path d="M16.500 5l61.500 9.500v80l-61.500 6z" fill="#fdfdfd"/><path d="M24 22.400l54 7.200" stroke="#222" stroke-width="1.500"/>
  <text x="22" y="50" font-size="20" font-family="Liberation Sans,sans-serif" fill="#111" stroke="#111" stroke-width=".3" transform="rotate(5 22 50) scale(.84 1)">Coherer</text>
  <text x="19" y="79" font-size="20" font-family="Liberation Sans,sans-serif" fill="#111" stroke="#111" stroke-width=".3" transform="rotate(5 19 79) scale(.84 1)">ptica, CN</text>
  <path d="M78 12h8v88h-8z" fill="#fff"/>
  <use href="#fflap"/></g>
 <!-- file 11.m2_wcf -->
 <g transform="translate(158,150)"><path d="M0 0h58l21 21v83H0z" fill="#f6f6f6" stroke="#e2e2e2" stroke-width="1"/><path d="M58 0v21h21z" fill="#e4e4e4"/></g>
 </svg>
 <div class="fl" style="left:218px;top:262px">1</div>
 <div class="fl" style="left:362px;top:262px">12</div>
 <div class="fl" style="left:506px;top:262px">123</div>
 <div class="fl" style="left:650px;top:262px"><span style="letter-spacing:0.500px">DFM</span></div>
 <div class="fl" style="left:794px;top:262px"><span style="letter-spacing:0.496px">DwnlData</span></div>
 <div class="fl" style="left:218px;top:410px"><span style="letter-spacing:0.197px">新建文件夹</span></div>
 <div class="fl" style="left:362px;top:410px"><span style="letter-spacing:0.620px">11.m2_wcf</span></div>
 <!-- bottom area -->
 <div class="a" style="left:0;top:439px;width:942px;height:151px;background:#f0f0f0"></div>
 <div class="t" style="letter-spacing:0.000px;right:792px;top:459px">文件名(N):</div>
 <div class="a" style="left:157px;top:452px;width:778px;height:28px;border:1px solid #3c7fb1;background:#fff"></div>
 <div class="t" style="left:162px;top:459px;color:#333">1.</div>
 <div class="a" style="left:173.500px;top:457px;width:1px;height:17px;background:#111"></div>
 <svg class="a" style="left:918px;top:462px" width="12" height="8" viewBox="0 0 12 8"><path d="M1 1l5 5 5-5" stroke="#444" stroke-width="1.200" fill="none"/></svg>
 <div class="t" style="letter-spacing:-0.166px;right:792px;top:490px">保存类型(T):</div>
 <div class="a" style="left:157px;top:484px;width:778px;height:27px;border:1px solid #c4c4c4;background:#e4e4e4"></div>
 <div class="t" style="letter-spacing:0.447px;left:162px;top:490px;white-space:pre">M2 camera file  (*.m2_wcf)</div>
 <svg class="a" style="left:918px;top:493px" width="12" height="8" viewBox="0 0 12 8"><path d="M1 1l5 5 5-5" stroke="#444" stroke-width="1.200" fill="none"/></svg>
 <svg class="a" style="left:14px;top:558px" width="13" height="9" viewBox="0 0 13 9"><path d="M1.500 7.500l5-5 5 5" stroke="#333" stroke-width="1.600" fill="none"/></svg>
 <div class="t" style="letter-spacing:-0.003px;left:34px;top:556px">隐藏文件夹</div>
 <div class="a" style="left:685px;top:544px;width:108px;height:30px;border:2px solid #0078d7;background:#e5f1fb"></div>
 <div class="t" style="left:685px;top:551px;width:108px;text-align:center">保存(S)</div>
 <div class="a" style="left:810px;top:544px;width:108px;height:30px;border:1px solid #adadad;background:#e1e1e1"></div>
 <div class="t" style="left:810px;top:551px;width:108px;text-align:center">取消</div>
 <svg class="a" style="left:928px;top:576px" width="11" height="11" viewBox="0 0 11 11"><path d="M9 1v2M9 5v2M9 9v1M5 5v2M5 9v1M1 9v1" stroke="#b4b4b4" stroke-width="2"/></svg>
 <!-- I-beam cursor -->
 <svg class="a" style="left:269px;top:464px" width="11" height="21" viewBox="0 0 11 21"><path d="M1 1.500q3 0 4.500 1.500Q7 1.500 10 1.500M1 19.500q3 0 4.500-1.500Q7 19.500 10 19.500M5.500 3v15" stroke="#111" stroke-width="1.600" fill="none"/></svg>
</div>
<!-- ===== taskbar ===== -->
<div class="a" style="left:864px;top:1030px;width:864px;height:50px;background:#1d2b31"></div>
<div class="a" style="left:1343px;top:1030px;width:200px;height:50px;background:#47575b"></div>
<div class="a" style="left:864px;top:1076px;width:74px;height:4px;background:#a9e3ee"></div>
<div class="a" style="left:946px;top:1076px;width:192px;height:4px;background:#a9e3ee"></div>
<div class="a" style="left:1147px;top:1076px;width:192px;height:4px;background:#a9e3ee"></div>
<div class="a" style="left:1343px;top:1076px;width:200px;height:4px;background:#b6ecf4"></div>
<!-- word icon -->
<div class="a" style="left:964px;top:1040px;width:19px;height:28px;background:linear-gradient(#41a5ee 0,#41a5ee 25%,#2b7cd3 25%,#2b7cd3 50%,#185abd 50%,#185abd 75%,#103f91 75%);border-radius:1px"></div>
<div class="a" style="left:954px;top:1045px;width:17px;height:17px;background:#185abd;color:#fff;font-size:12px;font-weight:bold;text-align:center;line-height:17px;border-radius:1px">W</div>
<div class="t" style="letter-spacing:-0.021px;left:989px;top:1048.500px;font-size:16px;color:#fff">21.1.8 dataray M...</div>
<div class="t" style="letter-spacing:-0.367px;left:1190px;top:1048.500px;font-size:16px;color:#fff">DataRay 8.0D27:L...</div>
<div class="t" style="letter-spacing:-0.672px;left:1390px;top:1048.500px;font-size:16px;color:#fff">另存为</div>
<svg class="a" style="left:1154px;top:1039px" width="32" height="32" viewBox="0 0 32 32"><defs><radialGradient id="dr"><stop offset="0" stop-color="#e01818"/><stop offset=".25" stop-color="#e82020"/><stop offset=".32" stop-color="#f0e020"/><stop offset=".5" stop-color="#38d038"/><stop offset=".68" stop-color="#18a030"/><stop offset=".75" stop-color="#1830c8"/><stop offset="1" stop-color="#0a1490"/></radialGradient></defs><circle cx="16" cy="16" r="12.500" fill="url(#dr)"/><path d="M16 1v30M1 16h30" stroke="#f4f4f4" stroke-width="1.300"/></svg>
<svg class="a" style="left:1354px;top:1039px" width="32" height="32" viewBox="0 0 32 32"><circle cx="16" cy="16" r="12.500" fill="url(#dr)"/><path d="M16 1v30M1 16h30" stroke="#f4f4f4" stroke-width="1.300"/></svg>
<!-- tray -->
<svg class="a" style="left:1552px;top:1044px" width="110" height="24" viewBox="0 0 110 24"><path d="M3 15l8-8 8 8" stroke="#fff" stroke-width="1.500" fill="none"/><path d="M31.500 9.500h3.500l4.500-3.800v12.600l-4.500-3.800h-3.500z" stroke="#fff" stroke-width="1.200" fill="none"/><path d="M42.500 9q1.800 3 0 6" stroke="#cfd6d8" stroke-width="1.100" fill="none"/><path d="M45.500 7q2.800 5 0 10" stroke="#7f8c90" stroke-width="1" fill="none"/><rect x="64.500" y="7.500" width="15.500" height="9.500" stroke="#fff" stroke-width="1.300" fill="none"/><rect x="66.300" y="9.300" width="11.900" height="5.900" fill="#fff"/><rect x="80.600" y="10.300" width="1.600" height="4" fill="#fff"/><path d="M60.300 4.500v2.500M62.700 4.500v2.500M59.500 7h4v1.800q0 1.800-2 1.800t-2-1.800zM61.500 10.600v2.800h3" stroke="#fff" stroke-width="1" fill="none"/></svg>
<div class="t" style="left:1640px;top:1044px;font-size:21px;color:#fff;font-weight:500">中</div>
<div class="t" style="letter-spacing:-0.009px;left:1692px;top:1036px;font-size:16px;color:#fff">10:16</div>
<div class="t" style="letter-spacing:0.944px;left:1673px;top:1060px;font-size:16px;color:#fff">2021/1/</div>
</body></html>
